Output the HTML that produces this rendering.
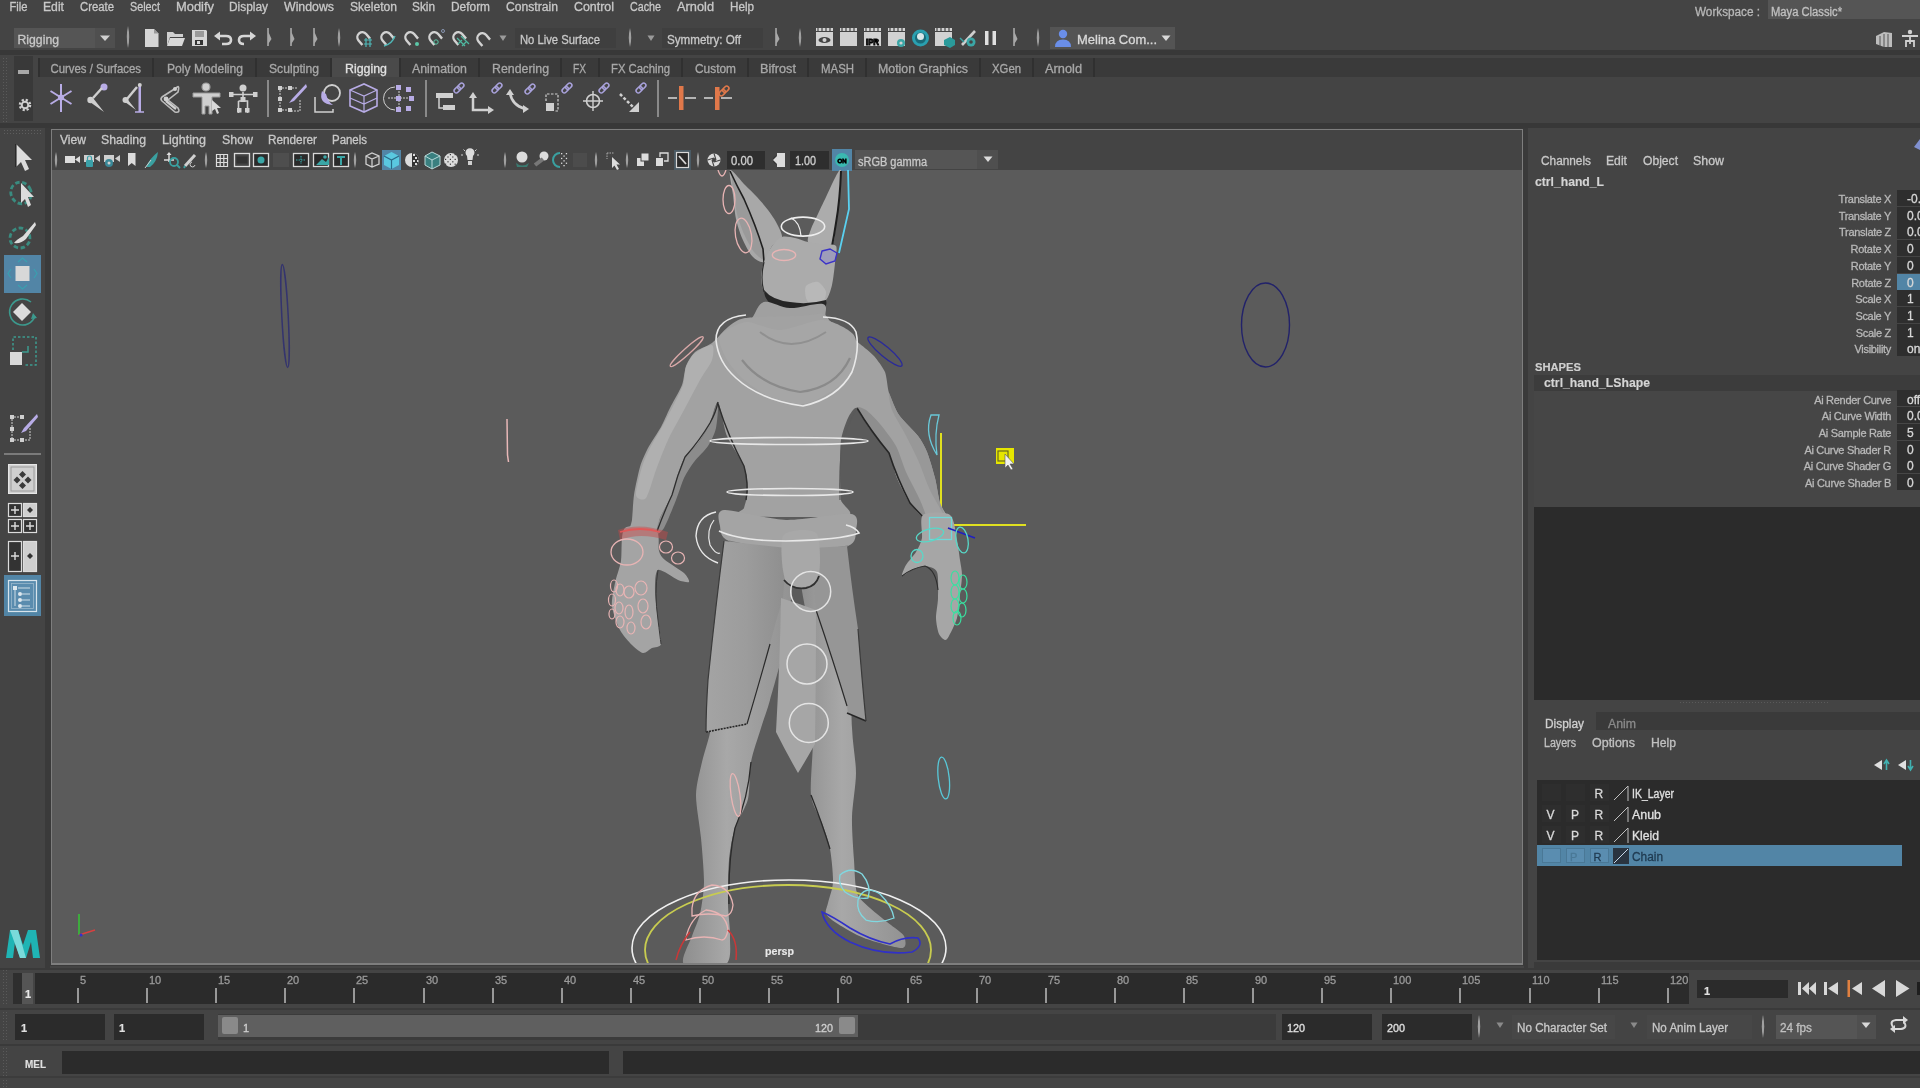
<!DOCTYPE html>
<html><head><meta charset="utf-8">
<style>
*{margin:0;padding:0;box-sizing:border-box}
html,body{width:1920px;height:1088px;overflow:hidden;background:#444;font-family:"Liberation Sans",sans-serif}
.a{position:absolute}
svg{position:absolute;left:0;top:0;will-change:transform}
text{font-family:"Liberation Sans",sans-serif;stroke:currentColor}
#root{position:absolute;left:0;top:0;width:1920px;height:1088px}
</style></head><body><div id="root">
<div class="a" style="left:1768px;top:0px;width:152px;height:19px;background:#555555;"></div>
<div class="a" style="left:0px;top:50px;width:1920px;height:5px;background:#383838;"></div>
<div class="a" style="left:14px;top:28px;width:81px;height:20px;background:#555555;"></div>
<div class="a" style="left:95px;top:28px;width:20px;height:20px;background:#4f4f4f;"></div>
<div class="a" style="left:515px;top:28px;width:101px;height:20px;background:#3f3f3f;"></div>
<div class="a" style="left:662px;top:28px;width:101px;height:20px;background:#3f3f3f;"></div>
<div class="a" style="left:1050px;top:27px;width:125px;height:22px;background:#545454;"></div>
<div class="a" style="left:14px;top:56px;width:19px;height:65px;background:#393939;"></div>
<div class="a" style="left:38px;top:58px;width:1882px;height:19px;background:#3a3a3a;"></div>
<div class="a" style="left:332px;top:58px;width:67px;height:19px;background:#4a4a4a;"></div>
<div class="a" style="left:0px;top:123px;width:1920px;height:5px;background:#383838;"></div>
<div class="a" style="left:45px;top:128px;width:5px;height:840px;background:#3a3a3a;"></div>
<div class="a" style="left:50px;top:128px;width:1474px;height:838px;background:#3a3a3a;"></div>
<div class="a" style="left:51px;top:129px;width:1472px;height:836px;background:#7e7e7e;"></div>
<div class="a" style="left:52px;top:130px;width:1470px;height:833px;background:#444444;"></div>
<div class="a" style="left:52px;top:170px;width:1470px;height:793px;background:#5b5b5b;"></div>
<div class="a" style="left:1524px;top:128px;width:4px;height:840px;background:#3a3a3a;"></div>
<div class="a" style="left:1897px;top:190px;width:23px;height:16px;background:#2e2e2e;"></div>
<div class="a" style="left:1897px;top:207px;width:23px;height:16px;background:#2e2e2e;"></div>
<div class="a" style="left:1897px;top:223px;width:23px;height:16px;background:#2e2e2e;"></div>
<div class="a" style="left:1897px;top:240px;width:23px;height:16px;background:#2e2e2e;"></div>
<div class="a" style="left:1897px;top:257px;width:23px;height:16px;background:#2e2e2e;"></div>
<div class="a" style="left:1897px;top:274px;width:23px;height:16px;background:#5285a6;"></div>
<div class="a" style="left:1897px;top:290px;width:23px;height:16px;background:#2e2e2e;"></div>
<div class="a" style="left:1897px;top:307px;width:23px;height:16px;background:#2e2e2e;"></div>
<div class="a" style="left:1897px;top:324px;width:23px;height:16px;background:#2e2e2e;"></div>
<div class="a" style="left:1897px;top:340px;width:23px;height:16px;background:#2e2e2e;"></div>
<div class="a" style="left:1534px;top:375px;width:386px;height:16px;background:#3c3c3c;"></div>
<div class="a" style="left:1534px;top:391px;width:386px;height:116px;background:#464646;"></div>
<div class="a" style="left:1897px;top:390px;width:23px;height:16px;background:#2e2e2e;"></div>
<div class="a" style="left:1897px;top:407px;width:23px;height:16px;background:#2e2e2e;"></div>
<div class="a" style="left:1897px;top:424px;width:23px;height:16px;background:#2e2e2e;"></div>
<div class="a" style="left:1897px;top:441px;width:23px;height:16px;background:#2e2e2e;"></div>
<div class="a" style="left:1897px;top:457px;width:23px;height:16px;background:#2e2e2e;"></div>
<div class="a" style="left:1897px;top:474px;width:23px;height:16px;background:#2e2e2e;"></div>
<div class="a" style="left:1534px;top:507px;width:386px;height:193px;background:#2b2b2b;"></div>
<div class="a" style="left:1534px;top:712px;width:386px;height:18px;background:#3a3a3a;"></div>
<div class="a" style="left:1534px;top:712px;width:62px;height:18px;background:#444444;"></div>
<div class="a" style="left:1537px;top:780px;width:383px;height:180px;background:#2b2b2b;"></div>
<div class="a" style="left:1542px;top:784px;width:19px;height:17px;background:#2e2e2e;"></div>
<div class="a" style="left:1566px;top:784px;width:19px;height:17px;background:#2e2e2e;"></div>
<div class="a" style="left:1590px;top:784px;width:19px;height:17px;background:#2e2e2e;"></div>
<div class="a" style="left:1542px;top:805px;width:19px;height:17px;background:#2e2e2e;"></div>
<div class="a" style="left:1566px;top:805px;width:19px;height:17px;background:#2e2e2e;"></div>
<div class="a" style="left:1590px;top:805px;width:19px;height:17px;background:#2e2e2e;"></div>
<div class="a" style="left:1542px;top:826px;width:19px;height:17px;background:#2e2e2e;"></div>
<div class="a" style="left:1566px;top:826px;width:19px;height:17px;background:#2e2e2e;"></div>
<div class="a" style="left:1590px;top:826px;width:19px;height:17px;background:#2e2e2e;"></div>
<div class="a" style="left:1537px;top:845px;width:365px;height:21px;background:#5285a6;"></div>
<div class="a" style="left:1542px;top:848px;width:19px;height:15px;background:#5a8db0;border:1px solid #4a7896"></div>
<div class="a" style="left:1566px;top:848px;width:19px;height:15px;background:#5a8db0;border:1px solid #4a7896"></div>
<div class="a" style="left:1590px;top:848px;width:19px;height:15px;background:#5a8db0;border:1px solid #4a7896"></div>
<div class="a" style="left:1613px;top:848px;width:16px;height:16px;background:#2a3440;"></div>
<div class="a" style="left:1534px;top:962px;width:386px;height:6px;background:#3a3a3a;"></div>
<div class="a" style="left:0px;top:968px;width:1920px;height:2px;background:#3a3a3a;"></div>
<div class="a" style="left:35px;top:973px;width:1654px;height:31px;background:#2b2b2b;"></div>
<div class="a" style="left:22px;top:973px;width:11px;height:31px;background:#555555;"></div>
<div class="a" style="left:77px;top:988px;width:2px;height:15px;background:#989898;"></div>
<div class="a" style="left:146px;top:988px;width:2px;height:15px;background:#989898;"></div>
<div class="a" style="left:215px;top:988px;width:2px;height:15px;background:#989898;"></div>
<div class="a" style="left:284px;top:988px;width:2px;height:15px;background:#989898;"></div>
<div class="a" style="left:353px;top:988px;width:2px;height:15px;background:#989898;"></div>
<div class="a" style="left:423px;top:988px;width:2px;height:15px;background:#989898;"></div>
<div class="a" style="left:492px;top:988px;width:2px;height:15px;background:#989898;"></div>
<div class="a" style="left:561px;top:988px;width:2px;height:15px;background:#989898;"></div>
<div class="a" style="left:630px;top:988px;width:2px;height:15px;background:#989898;"></div>
<div class="a" style="left:699px;top:988px;width:2px;height:15px;background:#989898;"></div>
<div class="a" style="left:768px;top:988px;width:2px;height:15px;background:#989898;"></div>
<div class="a" style="left:837px;top:988px;width:2px;height:15px;background:#989898;"></div>
<div class="a" style="left:907px;top:988px;width:2px;height:15px;background:#989898;"></div>
<div class="a" style="left:976px;top:988px;width:2px;height:15px;background:#989898;"></div>
<div class="a" style="left:1045px;top:988px;width:2px;height:15px;background:#989898;"></div>
<div class="a" style="left:1114px;top:988px;width:2px;height:15px;background:#989898;"></div>
<div class="a" style="left:1183px;top:988px;width:2px;height:15px;background:#989898;"></div>
<div class="a" style="left:1252px;top:988px;width:2px;height:15px;background:#989898;"></div>
<div class="a" style="left:1321px;top:988px;width:2px;height:15px;background:#989898;"></div>
<div class="a" style="left:1390px;top:988px;width:2px;height:15px;background:#989898;"></div>
<div class="a" style="left:1459px;top:988px;width:2px;height:15px;background:#989898;"></div>
<div class="a" style="left:1529px;top:988px;width:2px;height:15px;background:#989898;"></div>
<div class="a" style="left:1598px;top:988px;width:2px;height:15px;background:#989898;"></div>
<div class="a" style="left:1667px;top:988px;width:2px;height:15px;background:#989898;"></div>
<div class="a" style="left:1697px;top:980px;width:91px;height:18px;background:#2b2b2b;"></div>
<div class="a" style="left:0px;top:1008px;width:1920px;height:2px;background:#3a3a3a;"></div>
<div class="a" style="left:15px;top:1014px;width:90px;height:26px;background:#2b2b2b;"></div>
<div class="a" style="left:114px;top:1014px;width:90px;height:26px;background:#2b2b2b;"></div>
<div class="a" style="left:218px;top:1014px;width:1058px;height:26px;background:#3b3b3b;"></div>
<div class="a" style="left:218px;top:1015px;width:640px;height:22px;background:#5f5f5f;"></div>
<div class="a" style="left:222px;top:1017px;width:16px;height:17px;background:#8a8a8a;border-radius:2px"></div>
<div class="a" style="left:839px;top:1017px;width:16px;height:17px;background:#8a8a8a;border-radius:2px"></div>
<div class="a" style="left:1282px;top:1014px;width:90px;height:26px;background:#2b2b2b;"></div>
<div class="a" style="left:1382px;top:1014px;width:90px;height:26px;background:#2b2b2b;"></div>
<div class="a" style="left:1512px;top:1015px;width:103px;height:24px;background:#474747;"></div>
<div class="a" style="left:1647px;top:1015px;width:105px;height:24px;background:#474747;"></div>
<div class="a" style="left:1776px;top:1015px;width:100px;height:24px;background:#555555;"></div>
<div class="a" style="left:1857px;top:1015px;width:19px;height:24px;background:#4f4f4f;"></div>
<div class="a" style="left:0px;top:1044px;width:1920px;height:2px;background:#3a3a3a;"></div>
<div class="a" style="left:62px;top:1051px;width:547px;height:23px;background:#2b2b2b;"></div>
<div class="a" style="left:623px;top:1051px;width:1297px;height:23px;background:#2b2b2b;"></div>
<div class="a" style="left:0px;top:1076px;width:1920px;height:2px;background:#3c3c3c;"></div>
<div class="a" style="left:152px;top:58px;width:2px;height:19px;background:#303030;"></div>
<div class="a" style="left:255px;top:58px;width:2px;height:19px;background:#303030;"></div>
<div class="a" style="left:330px;top:58px;width:2px;height:19px;background:#303030;"></div>
<div class="a" style="left:399px;top:58px;width:2px;height:19px;background:#303030;"></div>
<div class="a" style="left:478px;top:58px;width:2px;height:19px;background:#303030;"></div>
<div class="a" style="left:560px;top:58px;width:2px;height:19px;background:#303030;"></div>
<div class="a" style="left:598px;top:58px;width:2px;height:19px;background:#303030;"></div>
<div class="a" style="left:681px;top:58px;width:2px;height:19px;background:#303030;"></div>
<div class="a" style="left:747px;top:58px;width:2px;height:19px;background:#303030;"></div>
<div class="a" style="left:807px;top:58px;width:2px;height:19px;background:#303030;"></div>
<div class="a" style="left:865px;top:58px;width:2px;height:19px;background:#303030;"></div>
<div class="a" style="left:979px;top:58px;width:2px;height:19px;background:#303030;"></div>
<div class="a" style="left:1032px;top:58px;width:2px;height:19px;background:#303030;"></div>
<div class="a" style="left:1093px;top:58px;width:2px;height:19px;background:#303030;"></div>
<div class="a" style="left:38px;top:58px;width:2px;height:19px;background:#303030;"></div>
<div class="a" style="left:267px;top:80px;width:2px;height:37px;background:#8a8a8a;"></div>
<div class="a" style="left:425px;top:80px;width:2px;height:37px;background:#8a8a8a;"></div>
<div class="a" style="left:657px;top:80px;width:2px;height:37px;background:#8a8a8a;"></div>
<div class="a" style="left:4px;top:255px;width:37px;height:38px;background:#5285a6;"></div>
<div class="a" style="left:4px;top:453px;width:37px;height:2px;background:#7a7a7a;"></div>
<div class="a" style="left:4px;top:575px;width:37px;height:41px;background:#5285a6;"></div>
<div class="a" style="left:382px;top:150px;width:19px;height:20px;background:#5285a6;"></div>
<div class="a" style="left:674px;top:150px;width:17px;height:20px;background:#4a5a64;"></div>
<div class="a" style="left:727px;top:151px;width:38px;height:18px;background:#2e2e2e;"></div>
<div class="a" style="left:790px;top:151px;width:39px;height:18px;background:#2e2e2e;"></div>
<div class="a" style="left:832px;top:149px;width:20px;height:22px;background:#5285a6;"></div>
<div class="a" style="left:855px;top:150px;width:122px;height:19px;background:#555555;"></div>
<div class="a" style="left:977px;top:150px;width:21px;height:19px;background:#4f4f4f;"></div>
<div class="a" style="left:1917px;top:982px;width:3px;height:13px;background:#1e1e1e;"></div>
<div class="a" style="left:13px;top:973px;width:9px;height:31px;background:#2e2e2e;"></div>
<div class="a" style="left:940px;top:433px;width:2px;height:77px;background:#e0e020;"></div>
<div class="a" style="left:952px;top:524px;width:74px;height:2px;background:#e0e020;"></div>
<svg width="1920" height="1088" viewBox="0 0 1920 1088">
<text x="9.5" y="11" font-size="12" fill="#c8c8c8" color="#c8c8c8" stroke-width="0.3" textLength="18" lengthAdjust="spacingAndGlyphs">File</text>
<text x="43" y="11" font-size="12" fill="#c8c8c8" color="#c8c8c8" stroke-width="0.3" textLength="21" lengthAdjust="spacingAndGlyphs">Edit</text>
<text x="80" y="11" font-size="12" fill="#c8c8c8" color="#c8c8c8" stroke-width="0.3" textLength="34" lengthAdjust="spacingAndGlyphs">Create</text>
<text x="130" y="11" font-size="12" fill="#c8c8c8" color="#c8c8c8" stroke-width="0.3" textLength="30" lengthAdjust="spacingAndGlyphs">Select</text>
<text x="176" y="11" font-size="12" fill="#c8c8c8" color="#c8c8c8" stroke-width="0.3" textLength="38" lengthAdjust="spacingAndGlyphs">Modify</text>
<text x="229" y="11" font-size="12" fill="#c8c8c8" color="#c8c8c8" stroke-width="0.3" textLength="39" lengthAdjust="spacingAndGlyphs">Display</text>
<text x="284" y="11" font-size="12" fill="#c8c8c8" color="#c8c8c8" stroke-width="0.3" textLength="50" lengthAdjust="spacingAndGlyphs">Windows</text>
<text x="350" y="11" font-size="12" fill="#c8c8c8" color="#c8c8c8" stroke-width="0.3" textLength="47" lengthAdjust="spacingAndGlyphs">Skeleton</text>
<text x="412" y="11" font-size="12" fill="#c8c8c8" color="#c8c8c8" stroke-width="0.3" textLength="23" lengthAdjust="spacingAndGlyphs">Skin</text>
<text x="451" y="11" font-size="12" fill="#c8c8c8" color="#c8c8c8" stroke-width="0.3" textLength="39" lengthAdjust="spacingAndGlyphs">Deform</text>
<text x="506" y="11" font-size="12" fill="#c8c8c8" color="#c8c8c8" stroke-width="0.3" textLength="52" lengthAdjust="spacingAndGlyphs">Constrain</text>
<text x="574" y="11" font-size="12" fill="#c8c8c8" color="#c8c8c8" stroke-width="0.3" textLength="40" lengthAdjust="spacingAndGlyphs">Control</text>
<text x="630" y="11" font-size="12" fill="#c8c8c8" color="#c8c8c8" stroke-width="0.3" textLength="31" lengthAdjust="spacingAndGlyphs">Cache</text>
<text x="677" y="11" font-size="12" fill="#c8c8c8" color="#c8c8c8" stroke-width="0.3" textLength="37" lengthAdjust="spacingAndGlyphs">Arnold</text>
<text x="730" y="11" font-size="12" fill="#c8c8c8" color="#c8c8c8" stroke-width="0.3" textLength="24" lengthAdjust="spacingAndGlyphs">Help</text>
<text x="1695" y="15.5" font-size="12" fill="#b8b8b8" color="#b8b8b8" stroke-width="0.3" textLength="65" lengthAdjust="spacingAndGlyphs">Workspace :</text>
<text x="1771" y="15.5" font-size="12" fill="#c0c0c0" color="#c0c0c0" stroke-width="0.3" textLength="71" lengthAdjust="spacingAndGlyphs">Maya Classic*</text>
<text x="17.5" y="44" font-size="12" fill="#c8c8c8" color="#c8c8c8" stroke-width="0.3" textLength="41.5" lengthAdjust="spacingAndGlyphs">Rigging</text>
<text x="520" y="44" font-size="12" fill="#c8c8c8" color="#c8c8c8" stroke-width="0.3" textLength="80" lengthAdjust="spacingAndGlyphs">No Live Surface</text>
<text x="667" y="44" font-size="12" fill="#c8c8c8" color="#c8c8c8" stroke-width="0.3" textLength="74" lengthAdjust="spacingAndGlyphs">Symmetry: Off</text>
<text x="1077" y="44" font-size="12" fill="#d8d8d8" color="#d8d8d8" stroke-width="0.3" textLength="80" lengthAdjust="spacingAndGlyphs">Melina Com...</text>
<text x="50.5" y="73" font-size="12" fill="#a8a8a8" color="#a8a8a8" stroke-width="0.3" textLength="90.5" lengthAdjust="spacingAndGlyphs">Curves / Surfaces</text>
<text x="167" y="73" font-size="12" fill="#a8a8a8" color="#a8a8a8" stroke-width="0.3" textLength="76" lengthAdjust="spacingAndGlyphs">Poly Modeling</text>
<text x="269" y="73" font-size="12" fill="#a8a8a8" color="#a8a8a8" stroke-width="0.3" textLength="50" lengthAdjust="spacingAndGlyphs">Sculpting</text>
<text x="345" y="73" font-size="12" fill="#e0e0e0" color="#e0e0e0" stroke-width="0.3" textLength="42" lengthAdjust="spacingAndGlyphs">Rigging</text>
<text x="412" y="73" font-size="12" fill="#a8a8a8" color="#a8a8a8" stroke-width="0.3" textLength="55" lengthAdjust="spacingAndGlyphs">Animation</text>
<text x="492" y="73" font-size="12" fill="#a8a8a8" color="#a8a8a8" stroke-width="0.3" textLength="57" lengthAdjust="spacingAndGlyphs">Rendering</text>
<text x="573" y="73" font-size="12" fill="#a8a8a8" color="#a8a8a8" stroke-width="0.3" textLength="13" lengthAdjust="spacingAndGlyphs">FX</text>
<text x="611" y="73" font-size="12" fill="#a8a8a8" color="#a8a8a8" stroke-width="0.3" textLength="59" lengthAdjust="spacingAndGlyphs">FX Caching</text>
<text x="695" y="73" font-size="12" fill="#a8a8a8" color="#a8a8a8" stroke-width="0.3" textLength="41" lengthAdjust="spacingAndGlyphs">Custom</text>
<text x="760" y="73" font-size="12" fill="#a8a8a8" color="#a8a8a8" stroke-width="0.3" textLength="36" lengthAdjust="spacingAndGlyphs">Bifrost</text>
<text x="821" y="73" font-size="12" fill="#a8a8a8" color="#a8a8a8" stroke-width="0.3" textLength="33" lengthAdjust="spacingAndGlyphs">MASH</text>
<text x="878" y="73" font-size="12" fill="#a8a8a8" color="#a8a8a8" stroke-width="0.3" textLength="90" lengthAdjust="spacingAndGlyphs">Motion Graphics</text>
<text x="992" y="73" font-size="12" fill="#a8a8a8" color="#a8a8a8" stroke-width="0.3" textLength="29" lengthAdjust="spacingAndGlyphs">XGen</text>
<text x="1045" y="73" font-size="12" fill="#a8a8a8" color="#a8a8a8" stroke-width="0.3" textLength="37" lengthAdjust="spacingAndGlyphs">Arnold</text>
<text x="60" y="144" font-size="12" fill="#c8c8c8" color="#c8c8c8" stroke-width="0.3" textLength="26" lengthAdjust="spacingAndGlyphs">View</text>
<text x="101" y="144" font-size="12" fill="#c8c8c8" color="#c8c8c8" stroke-width="0.3" textLength="45" lengthAdjust="spacingAndGlyphs">Shading</text>
<text x="162" y="144" font-size="12" fill="#c8c8c8" color="#c8c8c8" stroke-width="0.3" textLength="44" lengthAdjust="spacingAndGlyphs">Lighting</text>
<text x="222" y="144" font-size="12" fill="#c8c8c8" color="#c8c8c8" stroke-width="0.3" textLength="31" lengthAdjust="spacingAndGlyphs">Show</text>
<text x="268" y="144" font-size="12" fill="#c8c8c8" color="#c8c8c8" stroke-width="0.3" textLength="49" lengthAdjust="spacingAndGlyphs">Renderer</text>
<text x="332" y="144" font-size="12" fill="#c8c8c8" color="#c8c8c8" stroke-width="0.3" textLength="35" lengthAdjust="spacingAndGlyphs">Panels</text>
<text x="1541" y="165" font-size="12" fill="#c8c8c8" color="#c8c8c8" stroke-width="0.3" textLength="50" lengthAdjust="spacingAndGlyphs">Channels</text>
<text x="1606" y="165" font-size="12" fill="#c8c8c8" color="#c8c8c8" stroke-width="0.3" textLength="21" lengthAdjust="spacingAndGlyphs">Edit</text>
<text x="1643" y="165" font-size="12" fill="#c8c8c8" color="#c8c8c8" stroke-width="0.3" textLength="35" lengthAdjust="spacingAndGlyphs">Object</text>
<text x="1693" y="165" font-size="12" fill="#c8c8c8" color="#c8c8c8" stroke-width="0.3" textLength="31" lengthAdjust="spacingAndGlyphs">Show</text>
<text x="1535" y="186" font-size="12" fill="#d4d4d4" color="#d4d4d4" stroke-width="0.15" font-weight="700" textLength="69" lengthAdjust="spacingAndGlyphs">ctrl_hand_L</text>
<text x="1891" y="203.0" font-size="11" fill="#b8b8b8" color="#b8b8b8" stroke-width="0.3" text-anchor="end" letter-spacing="-0.3">Translate X</text>
<text x="1907" y="203.0" font-size="12" fill="#d8d8d8" color="#d8d8d8" stroke-width="0.3">-0.</text>
<text x="1891" y="219.7" font-size="11" fill="#b8b8b8" color="#b8b8b8" stroke-width="0.3" text-anchor="end" letter-spacing="-0.3">Translate Y</text>
<text x="1907" y="219.7" font-size="12" fill="#d8d8d8" color="#d8d8d8" stroke-width="0.3">0.0</text>
<text x="1891" y="236.4" font-size="11" fill="#b8b8b8" color="#b8b8b8" stroke-width="0.3" text-anchor="end" letter-spacing="-0.3">Translate Z</text>
<text x="1907" y="236.4" font-size="12" fill="#d8d8d8" color="#d8d8d8" stroke-width="0.3">0.0</text>
<text x="1891" y="253.1" font-size="11" fill="#b8b8b8" color="#b8b8b8" stroke-width="0.3" text-anchor="end" letter-spacing="-0.3">Rotate X</text>
<text x="1907" y="253.1" font-size="12" fill="#d8d8d8" color="#d8d8d8" stroke-width="0.3">0</text>
<text x="1891" y="269.8" font-size="11" fill="#b8b8b8" color="#b8b8b8" stroke-width="0.3" text-anchor="end" letter-spacing="-0.3">Rotate Y</text>
<text x="1907" y="269.8" font-size="12" fill="#d8d8d8" color="#d8d8d8" stroke-width="0.3">0</text>
<text x="1891" y="286.5" font-size="11" fill="#b8b8b8" color="#b8b8b8" stroke-width="0.3" text-anchor="end" letter-spacing="-0.3">Rotate Z</text>
<text x="1907" y="286.5" font-size="12" fill="#d8d8d8" color="#d8d8d8" stroke-width="0.3">0</text>
<text x="1891" y="303.2" font-size="11" fill="#b8b8b8" color="#b8b8b8" stroke-width="0.3" text-anchor="end" letter-spacing="-0.3">Scale X</text>
<text x="1907" y="303.2" font-size="12" fill="#d8d8d8" color="#d8d8d8" stroke-width="0.3">1</text>
<text x="1891" y="319.9" font-size="11" fill="#b8b8b8" color="#b8b8b8" stroke-width="0.3" text-anchor="end" letter-spacing="-0.3">Scale Y</text>
<text x="1907" y="319.9" font-size="12" fill="#d8d8d8" color="#d8d8d8" stroke-width="0.3">1</text>
<text x="1891" y="336.6" font-size="11" fill="#b8b8b8" color="#b8b8b8" stroke-width="0.3" text-anchor="end" letter-spacing="-0.3">Scale Z</text>
<text x="1907" y="336.6" font-size="12" fill="#d8d8d8" color="#d8d8d8" stroke-width="0.3">1</text>
<text x="1891" y="353.29999999999995" font-size="11" fill="#b8b8b8" color="#b8b8b8" stroke-width="0.3" text-anchor="end" letter-spacing="-0.3">Visibility</text>
<text x="1907" y="353.29999999999995" font-size="12" fill="#d8d8d8" color="#d8d8d8" stroke-width="0.3">on</text>
<text x="1535" y="370.5" font-size="11" fill="#d0d0d0" color="#d0d0d0" stroke-width="0.15" font-weight="700" textLength="46" lengthAdjust="spacingAndGlyphs">SHAPES</text>
<text x="1544" y="387" font-size="12" fill="#d4d4d4" color="#d4d4d4" stroke-width="0.15" font-weight="700" textLength="106" lengthAdjust="spacingAndGlyphs">ctrl_hand_LShape</text>
<text x="1891" y="403.5" font-size="11" fill="#b8b8b8" color="#b8b8b8" stroke-width="0.3" text-anchor="end" letter-spacing="-0.3">Ai Render Curve</text>
<text x="1907" y="403.5" font-size="12" fill="#d8d8d8" color="#d8d8d8" stroke-width="0.3">off</text>
<text x="1891" y="420.2" font-size="11" fill="#b8b8b8" color="#b8b8b8" stroke-width="0.3" text-anchor="end" letter-spacing="-0.3">Ai Curve Width</text>
<text x="1907" y="420.2" font-size="12" fill="#d8d8d8" color="#d8d8d8" stroke-width="0.3">0.0</text>
<text x="1891" y="436.9" font-size="11" fill="#b8b8b8" color="#b8b8b8" stroke-width="0.3" text-anchor="end" letter-spacing="-0.3">Ai Sample Rate</text>
<text x="1907" y="436.9" font-size="12" fill="#d8d8d8" color="#d8d8d8" stroke-width="0.3">5</text>
<text x="1891" y="453.6" font-size="11" fill="#b8b8b8" color="#b8b8b8" stroke-width="0.3" text-anchor="end" letter-spacing="-0.3">Ai Curve Shader R</text>
<text x="1907" y="453.6" font-size="12" fill="#d8d8d8" color="#d8d8d8" stroke-width="0.3">0</text>
<text x="1891" y="470.3" font-size="11" fill="#b8b8b8" color="#b8b8b8" stroke-width="0.3" text-anchor="end" letter-spacing="-0.3">Ai Curve Shader G</text>
<text x="1907" y="470.3" font-size="12" fill="#d8d8d8" color="#d8d8d8" stroke-width="0.3">0</text>
<text x="1891" y="487.0" font-size="11" fill="#b8b8b8" color="#b8b8b8" stroke-width="0.3" text-anchor="end" letter-spacing="-0.3">Ai Curve Shader B</text>
<text x="1907" y="487.0" font-size="12" fill="#d8d8d8" color="#d8d8d8" stroke-width="0.3">0</text>
<line x1="1680" y1="702.5" x2="1830" y2="702.5" stroke="#5a5a5a" stroke-width="1" stroke-dasharray="1,2"/>
<text x="1545" y="728" font-size="12" fill="#d0d0d0" color="#d0d0d0" stroke-width="0.3" textLength="39" lengthAdjust="spacingAndGlyphs">Display</text>
<text x="1608" y="728" font-size="12" fill="#8a8a8a" color="#8a8a8a" stroke-width="0.3" textLength="28" lengthAdjust="spacingAndGlyphs">Anim</text>
<text x="1544" y="746.5" font-size="12" fill="#c0c0c0" color="#c0c0c0" stroke-width="0.3" textLength="32" lengthAdjust="spacingAndGlyphs">Layers</text>
<text x="1592" y="746.5" font-size="12" fill="#c0c0c0" color="#c0c0c0" stroke-width="0.3" textLength="43" lengthAdjust="spacingAndGlyphs">Options</text>
<text x="1651" y="746.5" font-size="12" fill="#c0c0c0" color="#c0c0c0" stroke-width="0.3" textLength="25" lengthAdjust="spacingAndGlyphs">Help</text>
<text x="1594.5" y="797.5" font-size="12" fill="#d8d8d8" color="#d8d8d8" stroke-width="0.3">R</text>
<path d="M1614 800 L1628 786 L1628 801" fill="none" stroke="#c0c0c0" stroke-width="1"/>
<text x="1632" y="797.5" font-size="12" fill="#e0e0e0" color="#e0e0e0" stroke-width="0.3" textLength="42" lengthAdjust="spacingAndGlyphs">IK_Layer</text>
<text x="1546.5" y="818.5" font-size="12" fill="#d8d8d8" color="#d8d8d8" stroke-width="0.3">V</text>
<text x="1571" y="818.5" font-size="12" fill="#d8d8d8" color="#d8d8d8" stroke-width="0.3">P</text>
<text x="1594.5" y="818.5" font-size="12" fill="#d8d8d8" color="#d8d8d8" stroke-width="0.3">R</text>
<path d="M1614 821 L1628 807 L1628 822" fill="none" stroke="#c0c0c0" stroke-width="1"/>
<text x="1632" y="818.5" font-size="12" fill="#e0e0e0" color="#e0e0e0" stroke-width="0.3" textLength="29" lengthAdjust="spacingAndGlyphs">Anub</text>
<text x="1546.5" y="839.5" font-size="12" fill="#d8d8d8" color="#d8d8d8" stroke-width="0.3">V</text>
<text x="1571" y="839.5" font-size="12" fill="#d8d8d8" color="#d8d8d8" stroke-width="0.3">P</text>
<text x="1594.5" y="839.5" font-size="12" fill="#d8d8d8" color="#d8d8d8" stroke-width="0.3">R</text>
<path d="M1614 842 L1628 828 L1628 843" fill="none" stroke="#c0c0c0" stroke-width="1"/>
<text x="1632" y="839.5" font-size="12" fill="#e0e0e0" color="#e0e0e0" stroke-width="0.3" textLength="27" lengthAdjust="spacingAndGlyphs">Kleid</text>
<line x1="1614" y1="863" x2="1628" y2="849" stroke="#c8d8e8" stroke-width="1"/>
<text x="1632" y="860.5" font-size="12" fill="#1f3a50" color="#1f3a50" stroke-width="0.3" textLength="31" lengthAdjust="spacingAndGlyphs">Chain</text>
<text x="1593.5" y="860.5" font-size="11" fill="#1f3a50" color="#1f3a50" stroke-width="0.3">R</text>
<text x="1570" y="860.5" font-size="11" fill="#4a7896" color="#4a7896" stroke-width="0.3">P</text>
<text x="25" y="998" font-size="11" fill="#e8e8e8" color="#e8e8e8" stroke-width="0.15" font-weight="700">1</text>
<text x="80" y="984" font-size="11" fill="#9a9a9a" color="#9a9a9a" stroke-width="0.3">5</text>
<text x="149" y="984" font-size="11" fill="#9a9a9a" color="#9a9a9a" stroke-width="0.3">10</text>
<text x="218" y="984" font-size="11" fill="#9a9a9a" color="#9a9a9a" stroke-width="0.3">15</text>
<text x="287" y="984" font-size="11" fill="#9a9a9a" color="#9a9a9a" stroke-width="0.3">20</text>
<text x="356" y="984" font-size="11" fill="#9a9a9a" color="#9a9a9a" stroke-width="0.3">25</text>
<text x="426" y="984" font-size="11" fill="#9a9a9a" color="#9a9a9a" stroke-width="0.3">30</text>
<text x="495" y="984" font-size="11" fill="#9a9a9a" color="#9a9a9a" stroke-width="0.3">35</text>
<text x="564" y="984" font-size="11" fill="#9a9a9a" color="#9a9a9a" stroke-width="0.3">40</text>
<text x="633" y="984" font-size="11" fill="#9a9a9a" color="#9a9a9a" stroke-width="0.3">45</text>
<text x="702" y="984" font-size="11" fill="#9a9a9a" color="#9a9a9a" stroke-width="0.3">50</text>
<text x="771" y="984" font-size="11" fill="#9a9a9a" color="#9a9a9a" stroke-width="0.3">55</text>
<text x="840" y="984" font-size="11" fill="#9a9a9a" color="#9a9a9a" stroke-width="0.3">60</text>
<text x="910" y="984" font-size="11" fill="#9a9a9a" color="#9a9a9a" stroke-width="0.3">65</text>
<text x="979" y="984" font-size="11" fill="#9a9a9a" color="#9a9a9a" stroke-width="0.3">70</text>
<text x="1048" y="984" font-size="11" fill="#9a9a9a" color="#9a9a9a" stroke-width="0.3">75</text>
<text x="1117" y="984" font-size="11" fill="#9a9a9a" color="#9a9a9a" stroke-width="0.3">80</text>
<text x="1186" y="984" font-size="11" fill="#9a9a9a" color="#9a9a9a" stroke-width="0.3">85</text>
<text x="1255" y="984" font-size="11" fill="#9a9a9a" color="#9a9a9a" stroke-width="0.3">90</text>
<text x="1324" y="984" font-size="11" fill="#9a9a9a" color="#9a9a9a" stroke-width="0.3">95</text>
<text x="1393" y="984" font-size="11" fill="#9a9a9a" color="#9a9a9a" stroke-width="0.3">100</text>
<text x="1462" y="984" font-size="11" fill="#9a9a9a" color="#9a9a9a" stroke-width="0.3">105</text>
<text x="1532" y="984" font-size="11" fill="#9a9a9a" color="#9a9a9a" stroke-width="0.3">110</text>
<text x="1601" y="984" font-size="11" fill="#9a9a9a" color="#9a9a9a" stroke-width="0.3">115</text>
<text x="1670" y="984" font-size="11" fill="#9a9a9a" color="#9a9a9a" stroke-width="0.3">120</text>
<text x="1704" y="995" font-size="11" fill="#e0e0e0" color="#e0e0e0" stroke-width="0.15" font-weight="700">1</text>
<text x="21" y="1032" font-size="11" fill="#e0e0e0" color="#e0e0e0" stroke-width="0.15" font-weight="700">1</text>
<text x="119" y="1032" font-size="11" fill="#e0e0e0" color="#e0e0e0" stroke-width="0.15" font-weight="700">1</text>
<text x="243" y="1032" font-size="11" fill="#d0d0d0" color="#d0d0d0" stroke-width="0.3">1</text>
<text x="815" y="1032" font-size="11" fill="#d0d0d0" color="#d0d0d0" stroke-width="0.3" textLength="18" lengthAdjust="spacingAndGlyphs">120</text>
<text x="1287" y="1032" font-size="11" fill="#e0e0e0" color="#e0e0e0" stroke-width="0.3" textLength="18" lengthAdjust="spacingAndGlyphs">120</text>
<text x="1387" y="1032" font-size="11" fill="#e0e0e0" color="#e0e0e0" stroke-width="0.3" textLength="18" lengthAdjust="spacingAndGlyphs">200</text>
<text x="1517" y="1032" font-size="12" fill="#c8c8c8" color="#c8c8c8" stroke-width="0.3" textLength="90" lengthAdjust="spacingAndGlyphs">No Character Set</text>
<text x="1652" y="1032" font-size="12" fill="#c8c8c8" color="#c8c8c8" stroke-width="0.3" textLength="76" lengthAdjust="spacingAndGlyphs">No Anim Layer</text>
<text x="1780" y="1032" font-size="12" fill="#c0c0c0" color="#c0c0c0" stroke-width="0.3" textLength="32" lengthAdjust="spacingAndGlyphs">24 fps</text>
<text x="25" y="1068" font-size="11" fill="#e0e0e0" color="#e0e0e0" stroke-width="0.15" font-weight="700" textLength="21" lengthAdjust="spacingAndGlyphs">MEL</text>
<path d="M128 26 Q130.4 37.0 128 48 Q125.6 37.0 128 26Z" fill="#a0a0a0"/>
<path d="M100 35.5 L110 35.5 L105 41Z" fill="#d0d0d0"/>
<path d="M145 29 L154 29 L158.5 33.5 L158.5 47 L145 47Z" fill="#d6d6d6"/><path d="M154 29 L154 33.5 L158.5 33.5" fill="#9a9a9a"/>
<path d="M167 32 L173 32 L175 34 L183 34 L183 37 L170 37 L167 46Z" fill="#cfcfcf"/><path d="M170 38 L185 38 L182 46 L167 46Z" fill="#d8d8d8"/>
<path d="M192 30 L206 30 L207 31 L207 46 L192 46Z" fill="#d6d6d6"/><rect x="195" y="31" width="9" height="6" fill="#9a9a9a"/><rect x="195" y="40" width="8" height="5" fill="#333"/><rect x="197" y="41" width="3" height="3" fill="#d6d6d6"/>
<path d="M219 36 L226 36 Q231 36 231 40 Q231 44 226 44 L222 44" fill="none" stroke="#d6d6d6" stroke-width="2.6"/><path d="M214 36 L220 31.5 L220 40.5Z" fill="#d6d6d6"/>
<path d="M251 36 L244 36 Q239 36 239 40 Q239 44 244 44" fill="none" stroke="#d6d6d6" stroke-width="2.6"/><path d="M256 36 L250 31.5 L250 40.5Z" fill="#d6d6d6"/>
<path d="M267.2 28 L268.8 28 L268.9 33.0 L271.5 39.0 L268.9 43.0 L268.8 46 L267.2 46Z" fill="#a8a8a8"/>
<path d="M290.2 28 L291.8 28 L291.9 33.0 L294.5 39.0 L291.9 43.0 L291.8 46 L290.2 46Z" fill="#a8a8a8"/>
<path d="M313.2 28 L314.8 28 L314.9 33.0 L317.5 39.0 L314.9 43.0 L314.8 46 L313.2 46Z" fill="#a8a8a8"/>
<path d="M339 28 Q341.4 37.5 339 47 Q336.6 37.5 339 28Z" fill="#a0a0a0"/>
<g transform="translate(363,38) rotate(-40)"><path d="M-5 5 L-5 -1 A5 5 0 0 1 5 -1 L5 5" fill="none" stroke="#d2d2d2" stroke-width="2.4"/></g><path d="M364 40 h8 M364 44 h8 M366 38 v9 M370 38 v9" stroke="#4fb8b8" stroke-width="1.2"/>
<g transform="translate(387,38) rotate(-40)"><path d="M-5 5 L-5 -1 A5 5 0 0 1 5 -1 L5 5" fill="none" stroke="#d2d2d2" stroke-width="2.4"/></g><path d="M384 46 Q392 44 395 36" fill="none" stroke="#4fb8b8" stroke-width="1.4"/>
<g transform="translate(411,38) rotate(-40)"><path d="M-5 5 L-5 -1 A5 5 0 0 1 5 -1 L5 5" fill="none" stroke="#d2d2d2" stroke-width="2.4"/></g><circle cx="417" cy="44" r="2" fill="#5cc8a8"/>
<g transform="translate(435,38) rotate(-40)"><path d="M-5 5 L-5 -1 A5 5 0 0 1 5 -1 L5 5" fill="none" stroke="#d2d2d2" stroke-width="2.4"/></g><circle cx="436" cy="42" r="2.2" fill="none" stroke="#5cc8a8" stroke-width="1"/><circle cx="443" cy="31" r="1.5" fill="none" stroke="#9ac" stroke-width="0.8"/>
<g transform="translate(459,38) rotate(-40)"><path d="M-5 5 L-5 -1 A5 5 0 0 1 5 -1 L5 5" fill="none" stroke="#d2d2d2" stroke-width="2.4"/></g><path d="M457 38 L465 46 M461 36 L469 44 M462 40 L458 44 M466 42 L462 46" stroke="#4fb8a0" stroke-width="1.2"/>
<g transform="translate(483,39) rotate(-40)"><path d="M-5 5 L-5 -1 A5 5 0 0 1 5 -1 L5 5" fill="none" stroke="#d2d2d2" stroke-width="2.4"/></g>
<path d="M499.5 35.5 L506.5 35.5 L503 41Z" fill="#9a9a9a"/>
<path d="M630 28 Q632.4 37.5 630 47 Q627.6 37.5 630 28Z" fill="#a0a0a0"/>
<path d="M647.5 35.5 L654.5 35.5 L651 41Z" fill="#9a9a9a"/>
<path d="M775.2 28 L776.8 28 L776.9 33.0 L779.5 39.0 L776.9 43.0 L776.8 46 L775.2 46Z" fill="#a8a8a8"/>
<path d="M800 28 Q802.4 37.5 800 47 Q797.6 37.5 800 28Z" fill="#a0a0a0"/>
<rect x="816" y="32" width="17" height="14" fill="#d2d2d2"/><path d="M816 28 h17 v3 h-17z" fill="#d2d2d2"/><path d="M818 28 v3 M822 28 v3 M826 28 v3 M830 28 v3" stroke="#444" stroke-width="1.2"/><ellipse cx="824.5" cy="40" rx="6" ry="3" fill="#444"/><circle cx="824.5" cy="40" r="2" fill="#d2d2d2"/>
<rect x="840" y="32" width="17" height="14" fill="#d2d2d2"/><path d="M840 28 h17 v3 h-17z" fill="#d2d2d2"/><path d="M842 28 v3 M846 28 v3 M850 28 v3 M854 28 v3" stroke="#444" stroke-width="1.2"/>
<rect x="864" y="32" width="17" height="14" fill="#d2d2d2"/><path d="M864 28 h17 v3 h-17z" fill="#d2d2d2"/><path d="M866 28 v3 M870 28 v3 M874 28 v3 M878 28 v3" stroke="#444" stroke-width="1.2"/><text x="866" y="45" font-size="9" fill="#555" font-weight="700" textLength="13" lengthAdjust="spacingAndGlyphs">IPR</text>
<rect x="888" y="32" width="17" height="14" fill="#d2d2d2"/><path d="M888 28 h17 v3 h-17z" fill="#d2d2d2"/><path d="M890 28 v3 M894 28 v3 M898 28 v3 M902 28 v3" stroke="#444" stroke-width="1.2"/><circle cx="901" cy="43" r="4" fill="#3aa6a6"/><circle cx="901" cy="43" r="1.6" fill="#d2d2d2"/>
<circle cx="920.5" cy="38" r="8.5" fill="#2aa0b0"/><circle cx="920.5" cy="38" r="5.5" fill="#1a6a78"/><circle cx="920.5" cy="36.5" r="3.5" fill="#d8e8ea"/>
<rect x="935" y="32" width="17" height="14" fill="#d2d2d2"/><path d="M935 28 h17 v3 h-17z" fill="#d2d2d2"/><path d="M937 28 v3 M941 28 v3 M945 28 v3 M949 28 v3" stroke="#444" stroke-width="1.2"/><path d="M944 40 L950 37 L955 40 L955 45 L950 48 L944 45Z" fill="#2a9a9a"/>
<path d="M962 45 L975 31" stroke="#cfcfcf" stroke-width="2.6"/><circle cx="971" cy="42" r="4.5" fill="#3aa6a6"/><circle cx="971" cy="42" r="1.8" fill="#444"/><path d="M960 38 l4 4" stroke="#3aa6a6" stroke-width="1.5"/>
<rect x="985" y="31" width="3.5" height="14" fill="#e0e0e0"/><rect x="992.5" y="31" width="3.5" height="14" fill="#e0e0e0"/>
<path d="M1013.2 28 L1014.8 28 L1014.9 33.0 L1017.5 39.0 L1014.9 43.0 L1014.8 46 L1013.2 46Z" fill="#a8a8a8"/>
<path d="M1038 28 Q1040.4 37.5 1038 47 Q1035.6 37.5 1038 28Z" fill="#a0a0a0"/>
<circle cx="1063" cy="34" r="4.2" fill="#6a8ee8"/><path d="M1055 47 Q1055 39.5 1063 39.5 Q1071 39.5 1071 47Z" fill="#6a8ee8"/>
<path d="M1161.5 35.5 L1170.5 35.5 L1166 41Z" fill="#d8d8d8"/>
<path d="M1876 36 L1884 32 L1892 33 L1892 47 L1884 47 L1876 44Z" fill="#bdbdbd"/><path d="M1880 36 v10 M1884 34 v13 M1888 34 v13" stroke="#555" stroke-width="1"/>
<circle cx="1910" cy="32" r="2.2" fill="#d0d0d0"/><path d="M1902 36 h16 M1910 35 v9 M1906 47 v-6 h8 v6" stroke="#d0d0d0" stroke-width="1.8" fill="none"/>
<rect x="18" y="70" width="11" height="4" fill="#a8a8a8"/>
<circle cx="25" cy="105" r="5.2" fill="none" stroke="#cfcfcf" stroke-width="2.2" stroke-dasharray="2.2,1.9"/><circle cx="25" cy="105" r="3.3" fill="none" stroke="#cfcfcf" stroke-width="2"/>
<rect x="3" y="58" width="1" height="1" fill="#5a5a5a"/><rect x="6" y="58" width="1" height="1" fill="#5a5a5a"/>
<rect x="3" y="61" width="1" height="1" fill="#5a5a5a"/><rect x="6" y="61" width="1" height="1" fill="#5a5a5a"/>
<rect x="3" y="64" width="1" height="1" fill="#5a5a5a"/><rect x="6" y="64" width="1" height="1" fill="#5a5a5a"/>
<rect x="3" y="67" width="1" height="1" fill="#5a5a5a"/><rect x="6" y="67" width="1" height="1" fill="#5a5a5a"/>
<rect x="3" y="70" width="1" height="1" fill="#5a5a5a"/><rect x="6" y="70" width="1" height="1" fill="#5a5a5a"/>
<rect x="3" y="73" width="1" height="1" fill="#5a5a5a"/><rect x="6" y="73" width="1" height="1" fill="#5a5a5a"/>
<rect x="3" y="76" width="1" height="1" fill="#5a5a5a"/><rect x="6" y="76" width="1" height="1" fill="#5a5a5a"/>
<rect x="3" y="79" width="1" height="1" fill="#5a5a5a"/><rect x="6" y="79" width="1" height="1" fill="#5a5a5a"/>
<rect x="3" y="82" width="1" height="1" fill="#5a5a5a"/><rect x="6" y="82" width="1" height="1" fill="#5a5a5a"/>
<rect x="3" y="85" width="1" height="1" fill="#5a5a5a"/><rect x="6" y="85" width="1" height="1" fill="#5a5a5a"/>
<rect x="3" y="88" width="1" height="1" fill="#5a5a5a"/><rect x="6" y="88" width="1" height="1" fill="#5a5a5a"/>
<rect x="3" y="91" width="1" height="1" fill="#5a5a5a"/><rect x="6" y="91" width="1" height="1" fill="#5a5a5a"/>
<rect x="3" y="94" width="1" height="1" fill="#5a5a5a"/><rect x="6" y="94" width="1" height="1" fill="#5a5a5a"/>
<rect x="3" y="97" width="1" height="1" fill="#5a5a5a"/><rect x="6" y="97" width="1" height="1" fill="#5a5a5a"/>
<rect x="3" y="100" width="1" height="1" fill="#5a5a5a"/><rect x="6" y="100" width="1" height="1" fill="#5a5a5a"/>
<rect x="3" y="103" width="1" height="1" fill="#5a5a5a"/><rect x="6" y="103" width="1" height="1" fill="#5a5a5a"/>
<rect x="3" y="106" width="1" height="1" fill="#5a5a5a"/><rect x="6" y="106" width="1" height="1" fill="#5a5a5a"/>
<rect x="3" y="109" width="1" height="1" fill="#5a5a5a"/><rect x="6" y="109" width="1" height="1" fill="#5a5a5a"/>
<rect x="3" y="112" width="1" height="1" fill="#5a5a5a"/><rect x="6" y="112" width="1" height="1" fill="#5a5a5a"/>
<rect x="3" y="115" width="1" height="1" fill="#5a5a5a"/><rect x="6" y="115" width="1" height="1" fill="#5a5a5a"/>
<rect x="3" y="118" width="1" height="1" fill="#5a5a5a"/><rect x="6" y="118" width="1" height="1" fill="#5a5a5a"/>
<rect x="3" y="121" width="1" height="1" fill="#5a5a5a"/><rect x="6" y="121" width="1" height="1" fill="#5a5a5a"/>
<g stroke="#b8ace6" stroke-width="2"><path d="M61 84 V112"/><path d="M50.5 91 L71.5 104"/><path d="M50.5 104 L71.5 91"/></g><circle cx="61" cy="97.5" r="3" fill="#b8ace6"/>
<circle cx="104" cy="87" r="3.5" fill="#b8ace6"/><path d="M102 88 L93 98" stroke="#cfcfcf" stroke-width="2.5"/><circle cx="90.5" cy="100" r="3.2" fill="#cfcfcf"/><path d="M90 102 L104 112 L93 98Z" fill="#cfcfcf"/>
<rect x="138.5" y="85" width="2.5" height="27" fill="#b8ace6"/><path d="M135 112 h9" stroke="#b8ace6" stroke-width="1.5"/><circle cx="139.8" cy="85" r="2" fill="#cfcfcf"/><path d="M137 87 L127 99" stroke="#cfcfcf" stroke-width="2.5"/><circle cx="125.5" cy="100" r="3" fill="#cfcfcf"/><path d="M125 102 L136 110 L128 100Z" fill="#cfcfcf"/>
<path d="M176 88 Q180 84 178 92 L168 100 L178 108 Q181 113 175 112 L162 101 Q160 99 162 97Z" fill="none" stroke="#bdbdbd" stroke-width="1.6"/><circle cx="175" cy="89" r="2" fill="#d0d0d0"/><circle cx="166" cy="99" r="2.4" fill="#d0d0d0"/><path d="M166 101 L176 109" stroke="#d0d0d0" stroke-width="2.3"/>
<circle cx="206" cy="87" r="4" fill="#cfcfcf" stroke="#999" stroke-width="1.2"/><path d="M193 93 h27 v4 h-8 v17 h-3 v-8 h-4 v8 h-3 v-17 h-9z" fill="#cfcfcf" stroke="#999" stroke-width="1"/><path d="M212 100 L221 108 L217 108 L219 113 L217 114 L215 109 L212 111Z" fill="#d8d8d8"/>
<circle cx="243" cy="88" r="3.5" fill="#cfcfcf"/><path d="M232 94.5 h22 M243 92 v10 M238.5 101 h9 v12 M238.5 101 v12" stroke="#cfcfcf" stroke-width="1.6" fill="none"/><rect x="229" y="92" width="4.5" height="5" fill="#cfcfcf"/><rect x="253" y="92" width="4.5" height="5" fill="#cfcfcf"/><rect x="240.5" y="97" width="5" height="5" fill="#cfcfcf"/><rect x="237" y="108" width="4.5" height="4.5" fill="#cfcfcf"/><rect x="245" y="108" width="4.5" height="4.5" fill="#cfcfcf"/>
<g fill="#cfcfcf"><rect x="278" y="86" width="4" height="4"/><rect x="288" y="86" width="4" height="4"/><rect x="278" y="97" width="4" height="4"/><rect x="278" y="108" width="4" height="4"/><rect x="288" y="108" width="4" height="4"/></g><path d="M280 90 v18 M282 88 h6 M282 110 h6 M292 88 h6 M300 100 v11 h-8" stroke="#cfcfcf" stroke-width="1" stroke-dasharray="2,1" fill="none"/><path d="M306 84 L292 99 L289 103 L294 101 L307 87Z" fill="#b8ace6"/>
<circle cx="332" cy="93" r="8" fill="none" stroke="#cfcfcf" stroke-width="1.8"/><path d="M322 91 Q318 104 333 105 Q328 102 326 94Z" fill="#b8ace6"/><path d="M315 97 v15 h18 v-3" stroke="#cfcfcf" stroke-width="1.5" fill="none"/>
<path d="M350 90 L364 84 L377 90 L377 106 L364 112 L350 106Z" fill="none" stroke="#b8ace6" stroke-width="1.6"/><path d="M350 90 L364 96 L377 90 M364 96 V112 M350 98 L364 104 L377 98" fill="none" stroke="#b8ace6" stroke-width="1.2"/>
<path d="M395 87 A11 11 0 0 0 395 110" fill="none" stroke="#cfcfcf" stroke-width="1"/><path d="M388 98 h22 M399 88 v22" stroke="#cfcfcf" stroke-width="1" stroke-dasharray="2,1"/><g fill="#b8ace6"><rect x="396" y="85" width="5" height="5"/><rect x="406" y="87" width="5" height="5"/><rect x="396" y="96" width="5" height="5"/><rect x="409" y="96" width="5" height="5"/><rect x="396" y="107" width="5" height="5"/><rect x="406" y="106" width="5" height="5"/></g>
<rect x="436" y="93" width="17" height="5" fill="#d0d0d0"/><path d="M439 98 v10 h4" stroke="#d0d0d0" stroke-width="1.5" fill="none"/><rect x="443" y="105" width="12" height="5" fill="#d0d0d0"/>
<g transform="translate(459,88) rotate(-45)"><rect x="-6" y="-2.2" width="7" height="4.4" rx="2.2" fill="none" stroke="#a9a2dc" stroke-width="1.5"/><rect x="-1" y="-2.2" width="7" height="4.4" rx="2.2" fill="none" stroke="#a9a2dc" stroke-width="1.5"/></g>
<path d="M473 97 V110 H488" fill="none" stroke="#d0d0d0" stroke-width="2.5"/><path d="M469 98 L473 92 L477 98Z M488 106 L494 110 L488 114Z" fill="#d0d0d0"/>
<g transform="translate(497,88) rotate(-45)"><rect x="-6" y="-2.2" width="7" height="4.4" rx="2.2" fill="none" stroke="#a9a2dc" stroke-width="1.5"/><rect x="-1" y="-2.2" width="7" height="4.4" rx="2.2" fill="none" stroke="#a9a2dc" stroke-width="1.5"/></g>
<path d="M510 93 Q512 105 525 109" fill="none" stroke="#d0d0d0" stroke-width="2.6"/><path d="M506 95 L510 89 L514 95Z M523 105 L529 109 L523 113Z" fill="#d0d0d0"/>
<g transform="translate(530,89) rotate(-45)"><rect x="-6" y="-2.2" width="7" height="4.4" rx="2.2" fill="none" stroke="#a9a2dc" stroke-width="1.5"/><rect x="-1" y="-2.2" width="7" height="4.4" rx="2.2" fill="none" stroke="#a9a2dc" stroke-width="1.5"/></g>
<rect x="546" y="103" width="8" height="8" fill="#d0d0d0"/><path d="M546 101 v-7 h12 v17 h-4" fill="none" stroke="#d0d0d0" stroke-width="1.2" stroke-dasharray="2.5,1.5"/>
<g transform="translate(567,88) rotate(-45)"><rect x="-6" y="-2.2" width="7" height="4.4" rx="2.2" fill="none" stroke="#a9a2dc" stroke-width="1.5"/><rect x="-1" y="-2.2" width="7" height="4.4" rx="2.2" fill="none" stroke="#a9a2dc" stroke-width="1.5"/></g>
<circle cx="593" cy="101" r="6.5" fill="none" stroke="#d0d0d0" stroke-width="1.6"/><path d="M583 101 h20 M593 91 v20" stroke="#d0d0d0" stroke-width="1.4"/>
<g transform="translate(604,88) rotate(-45)"><rect x="-6" y="-2.2" width="7" height="4.4" rx="2.2" fill="none" stroke="#a9a2dc" stroke-width="1.5"/><rect x="-1" y="-2.2" width="7" height="4.4" rx="2.2" fill="none" stroke="#a9a2dc" stroke-width="1.5"/></g>
<path d="M620 94 L636 110" stroke="#d0d0d0" stroke-width="2.5" stroke-dasharray="3,2"/><path d="M629 112 L639 112 L639 102Z" fill="#d0d0d0"/>
<g transform="translate(641,88) rotate(-45)"><rect x="-6" y="-2.2" width="7" height="4.4" rx="2.2" fill="none" stroke="#a9a2dc" stroke-width="1.5"/><rect x="-1" y="-2.2" width="7" height="4.4" rx="2.2" fill="none" stroke="#a9a2dc" stroke-width="1.5"/></g>
<path d="M668 98 h9 M685 98 h11" stroke="#d8d8d8" stroke-width="1.5"/><rect x="679" y="86" width="4.5" height="24" fill="#e0784a"/>
<path d="M704 98 h9 M721 98 h11" stroke="#d8d8d8" stroke-width="1.5"/><rect x="715" y="87" width="4.5" height="23" fill="#e0784a"/><g transform="translate(724,91) rotate(-45)"><rect x="-6" y="-2.2" width="7" height="4.4" rx="2.2" fill="none" stroke="#e0784a" stroke-width="1.6"/><rect x="-1" y="-2.2" width="7" height="4.4" rx="2.2" fill="none" stroke="#e0784a" stroke-width="1.6"/></g>
<rect x="4" y="130" width="1" height="1" fill="#5e5e5e"/><rect x="4" y="133" width="1" height="1" fill="#5e5e5e"/>
<rect x="7" y="130" width="1" height="1" fill="#5e5e5e"/><rect x="7" y="133" width="1" height="1" fill="#5e5e5e"/>
<rect x="10" y="130" width="1" height="1" fill="#5e5e5e"/><rect x="10" y="133" width="1" height="1" fill="#5e5e5e"/>
<rect x="13" y="130" width="1" height="1" fill="#5e5e5e"/><rect x="13" y="133" width="1" height="1" fill="#5e5e5e"/>
<rect x="16" y="130" width="1" height="1" fill="#5e5e5e"/><rect x="16" y="133" width="1" height="1" fill="#5e5e5e"/>
<rect x="19" y="130" width="1" height="1" fill="#5e5e5e"/><rect x="19" y="133" width="1" height="1" fill="#5e5e5e"/>
<rect x="22" y="130" width="1" height="1" fill="#5e5e5e"/><rect x="22" y="133" width="1" height="1" fill="#5e5e5e"/>
<rect x="25" y="130" width="1" height="1" fill="#5e5e5e"/><rect x="25" y="133" width="1" height="1" fill="#5e5e5e"/>
<rect x="28" y="130" width="1" height="1" fill="#5e5e5e"/><rect x="28" y="133" width="1" height="1" fill="#5e5e5e"/>
<rect x="31" y="130" width="1" height="1" fill="#5e5e5e"/><rect x="31" y="133" width="1" height="1" fill="#5e5e5e"/>
<rect x="34" y="130" width="1" height="1" fill="#5e5e5e"/><rect x="34" y="133" width="1" height="1" fill="#5e5e5e"/>
<rect x="37" y="130" width="1" height="1" fill="#5e5e5e"/><rect x="37" y="133" width="1" height="1" fill="#5e5e5e"/>
<rect x="40" y="130" width="1" height="1" fill="#5e5e5e"/><rect x="40" y="133" width="1" height="1" fill="#5e5e5e"/>
<path d="M16 144 L16 167 L21 162 L25 171 L29 169 L25 160 L32 160Z" fill="#dcdcdc"/><path d="M16 144 L16 167" stroke="#111" stroke-width="1"/>
<ellipse cx="21" cy="193" rx="10" ry="11" transform="rotate(-30 21 193)" fill="none" stroke="#3a8c80" stroke-width="2.8" stroke-dasharray="4.5,2.5"/><path d="M21 183 L21 203 L25 199 L28 207 L31 205 L28 197 L34 197Z" fill="#dcdcdc"/>
<ellipse cx="20" cy="238" rx="10" ry="10" transform="rotate(-20 20 238)" fill="none" stroke="#3a8c80" stroke-width="2.8" stroke-dasharray="4.5,2.5"/><path d="M35 222 L23 236 Q16 240 14 243 Q21 244 26 239 L36 225Z" fill="#dcdcdc"/>
<rect x="15.5" y="266" width="14" height="15" fill="#d8d8d8"/><path d="M18 262 L22.5 258 L27 262 M18 285 L22.5 289 L27 285 M11 269 L8 273.5 L11 278 M34 269 L37 273.5 L34 278" fill="none" stroke="#3aa0b0" stroke-width="1.2"/>
<path d="M31 302 A13 13 0 1 0 35 316" fill="none" stroke="#3c9a8e" stroke-width="1.6"/><path d="M33 313 L37 318 L31 319Z" fill="#3c9a8e"/><path d="M22 303 L31 312 L22 321 L13 312Z" fill="#dcdcdc"/>
<rect x="10" y="352" width="12" height="13" fill="#d8d8d8"/><path d="M13 350 V337 H36 V365 H24" fill="none" stroke="#3c9a8e" stroke-width="1.5" stroke-dasharray="2.5,2"/><path d="M22 352 h6 v-6" fill="none" stroke="#3c9a8e" stroke-width="1.5"/>
<g fill="#cfcfcf"><rect x="10" y="415" width="4" height="4"/><rect x="20" y="415" width="4" height="4"/><rect x="10" y="427" width="4" height="4"/><rect x="10" y="438" width="4" height="4"/><rect x="20" y="438" width="4" height="4"/></g><path d="M12 419 v19 M14 417 h6 M14 440 h6 M30 428 v12 h-6" stroke="#cfcfcf" stroke-width="1" stroke-dasharray="2,1" fill="none"/><path d="M37 414 L24 428 L21 433 L26 431 L38 417Z" fill="#b8ace6"/>
<rect x="8.5" y="464.5" width="28" height="29" fill="#cfcfcf" stroke="#e6e6e6" stroke-width="1"/><rect x="11" y="467" width="23" height="24" fill="none" stroke="#9a9a9a" stroke-width="1"/><g fill="#3a3a3a"><path d="M22.5 471 L26 474.5 L22.5 478 L19 474.5Z"/><path d="M17 476.5 L20.5 480 L17 483.5 L13.5 480Z"/><path d="M28 476.5 L31.5 480 L28 483.5 L24.5 480Z"/><path d="M22.5 482 L26 485.5 L22.5 489 L19 485.5Z"/></g>
<g stroke="#dcdcdc" stroke-width="1.2"><rect x="8.5" y="503.5" width="13" height="13" fill="#333"/><rect x="23.5" y="503.5" width="13" height="13" fill="#cfcfcf"/><rect x="8.5" y="519.5" width="13" height="13" fill="#333"/><rect x="23.5" y="519.5" width="13" height="13" fill="#333"/></g><path d="M11 510 h8 M15 506 v8 M11 526 h8 M15 522 v8 M26 526 h8 M30 522 v8" stroke="#dcdcdc" stroke-width="1.4"/><path d="M30 507 L33 510 L30 513 L27 510Z" fill="#333"/>
<rect x="8.5" y="541.5" width="13" height="30" fill="#333" stroke="#dcdcdc" stroke-width="1.2"/><rect x="23.5" y="541.5" width="13" height="30" fill="#cfcfcf" stroke="#dcdcdc" stroke-width="1.2"/><path d="M11 556 h8 M15 552 v8" stroke="#dcdcdc" stroke-width="1.4"/><path d="M30 553 L33 556 L30 559 L27 556Z" fill="#333"/>
<rect x="8.5" y="580.5" width="28" height="31" fill="#5a8cae" stroke="#d8e4ec" stroke-width="1.2"/><rect x="11.5" y="583.5" width="22" height="25" fill="none" stroke="#9ab8cc" stroke-width="0.8"/><g fill="#dde8ee"><rect x="13" y="586" width="4" height="4"/><circle cx="20" cy="594" r="2"/><circle cx="20" cy="600" r="2"/><circle cx="20" cy="606" r="2"/></g><path d="M15 590 v16 M22 594 h8 M22 600 h8 M22 606 h8 M18 588 h12" stroke="#dde8ee" stroke-width="0.9"/>
<path d="M6 958 L10 930 L18 930 L23 945 L28 930 L36 930 L40 958 L33 958 L31 942 L26 958 L20 958 L15 942 L13 958Z" fill="#1fb4b4"/><path d="M10 930 L18 930 L26 958 L20 958Z" fill="#7adada"/>
<path d="M56 152 Q58.4 160.0 56 168 Q53.6 160.0 56 152Z" fill="#a0a0a0"/>
<rect x="65" y="156" width="10" height="7" fill="#dcdcdc"/><path d="M75 159.5 L80 156 L80 163Z" fill="#dcdcdc"/>
<rect x="84" y="155" width="10" height="7" fill="#cfcfcf"/><path d="M95 158.5 L100 155 L100 162Z" fill="#cfcfcf"/><rect x="86" y="160" width="7" height="7" rx="1" fill="#3aa0a8"/><path d="M87.5 160 v-2 a2 2 0 0 1 4 0 v2" fill="none" stroke="#3aa0a8" stroke-width="1.2"/>
<rect x="104" y="155" width="10" height="7" fill="#cfcfcf"/><path d="M115 158.5 L120 155 L120 162Z" fill="#cfcfcf"/><circle cx="109" cy="163" r="4" fill="#3a8898"/><circle cx="109" cy="163" r="1.5" fill="#cfcfcf"/>
<path d="M128 153 h7.5 v13 l-3.75 -3 l-3.75 3Z" fill="#dcdcdc"/>
<path d="M146 167 Q150 158 158 152 Q157 162 150 167Z" fill="#3aa0a0"/><path d="M145 168 L151 160" stroke="#cfcfcf" stroke-width="1"/>
<path d="M164 160 h10 M169 153 v9" stroke="#dcdcdc" stroke-width="1.5"/><path d="M166.5 155 L169 152 L171.5 155Z" fill="#dcdcdc"/><circle cx="174" cy="162" r="4" fill="none" stroke="#3aa0a0" stroke-width="1.8"/><path d="M177 165 l3 3" stroke="#3aa0a0" stroke-width="1.8"/>
<path d="M185 166 L195 155" stroke="#d0d0d0" stroke-width="3"/><path d="M185 166 l-1 2" stroke="#3aa0a0" stroke-width="2"/><path d="M192 162 a2.5 2.5 0 1 0 3 3" fill="none" stroke="#cfcfcf" stroke-width="1"/>
<path d="M206 152 Q208.4 160.0 206 168 Q203.6 160.0 206 152Z" fill="#a0a0a0"/>
<path d="M216.5 154.5 h11 v12 h-11z M216.5 158.5 h11 M216.5 162.5 h11 M220.2 154.5 v12 M223.8 154.5 v12" fill="none" stroke="#dcdcdc" stroke-width="1.2"/>
<rect x="234.5" y="153.5" width="15" height="13" fill="none" stroke="#dcdcdc" stroke-width="1.3"/><rect x="236.5" y="156.5" width="11" height="7" fill="#333"/>
<rect x="253.5" y="153.5" width="15" height="13" fill="#2a2a2a" stroke="#d8d8d8" stroke-width="1.3"/><circle cx="261" cy="160" r="3.5" fill="#3aa6a6"/>
<rect x="273" y="153" width="16" height="14" fill="#4e4e4e"/>
<rect x="293.5" y="153.5" width="15" height="13" fill="#2a2a2a" stroke="#d8d8d8" stroke-width="1.3"/><path d="M296 160 h10 M301 156 v8" stroke="#3aa6a6" stroke-width="1.2" stroke-dasharray="1.5,1"/>
<rect x="313.5" y="153.5" width="15" height="13" fill="#2a2a2a" stroke="#d8d8d8" stroke-width="1.3"/><path d="M316 165 L322 159 L326 162 L329 157 V165Z" fill="#3aa6a6"/><circle cx="325" cy="157" r="1.8" fill="#3aa6a6"/>
<rect x="333.5" y="153.5" width="15" height="13" fill="#2a2a2a" stroke="#d8d8d8" stroke-width="1.3"/><path d="M337 157 h8 M341 157 v8" stroke="#3aa6a6" stroke-width="2"/>
<path d="M355 152 Q357.4 160.0 355 168 Q352.6 160.0 355 152Z" fill="#a0a0a0"/>
<path d="M366 156 L372 153 L379 156 L379 164 L372 167 L366 164Z M366 156 L372 159 L379 156 M372 159 V167" fill="none" stroke="#d0d0d0" stroke-width="1.3"/>
<path d="M384 156 L391.5 152 L399 156 L399 165 L391.5 169 L384 165Z" fill="#5ac8e0"/><path d="M384 156 L391.5 160 L399 156 M391.5 160 V169" fill="none" stroke="#2a6a88" stroke-width="1.2"/>
<circle cx="412" cy="160" r="7" fill="#dcdcdc"/><path d="M412 153 A7 7 0 0 1 412 167Z" fill="#333"/><g fill="#dcdcdc"><rect x="413" y="154" width="2" height="2"/><rect x="415" y="157" width="2" height="2"/><rect x="413" y="160" width="2" height="2"/><rect x="415" y="163" width="2" height="2"/><rect x="417" y="160" width="1.5" height="2"/></g>
<path d="M425 156 L432 152 L440 156 L440 165 L432 169 L425 165Z" fill="#3a8080" stroke="#b8d8d8" stroke-width="1"/><path d="M425 156 L432 160 L440 156 M432 160 V169" fill="none" stroke="#b8d8d8" stroke-width="1"/>
<circle cx="451" cy="160" r="7" fill="#dcdcdc"/><g fill="#3a3a3a"><rect x="445.0" y="154.0" width="1.2" height="1.2"/><rect x="445.0" y="158.8" width="1.2" height="1.2"/><rect x="445.0" y="163.6" width="1.2" height="1.2"/><rect x="447.4" y="156.4" width="1.2" height="1.2"/><rect x="447.4" y="161.2" width="1.2" height="1.2"/><rect x="449.8" y="154.0" width="1.2" height="1.2"/><rect x="449.8" y="158.8" width="1.2" height="1.2"/><rect x="449.8" y="163.6" width="1.2" height="1.2"/><rect x="452.2" y="156.4" width="1.2" height="1.2"/><rect x="452.2" y="161.2" width="1.2" height="1.2"/><rect x="454.6" y="154.0" width="1.2" height="1.2"/><rect x="454.6" y="158.8" width="1.2" height="1.2"/><rect x="454.6" y="163.6" width="1.2" height="1.2"/></g>
<path d="M467 156 a4.5 4.5 0 1 1 6 0 l-0.5 4 h-5z" fill="#dcdcdc"/><rect x="468" y="161" width="4" height="4" fill="#cfcfcf"/><path d="M463 155 h-2 M477 155 h2 M470 151 v-2 M465 151 l-1.5 -1.5 M475 151 l1.5 -1.5" stroke="#cfcfcf" stroke-width="1"/>
<path d="M505 152 Q507.4 160.0 505 168 Q502.6 160.0 505 152Z" fill="#a0a0a0"/>
<circle cx="522" cy="157" r="5.5" fill="#dcdcdc"/><path d="M516 163 Q522 168 529 163 L527 167 L517 167Z" fill="#3a7a70"/>
<circle cx="544" cy="156" r="4.5" fill="#dcdcdc"/><path d="M535 165 L543 159" stroke="#777" stroke-width="4"/>
<path d="M560 153 A7 7 0 0 0 560 167" fill="none" stroke="#3aa0a0" stroke-width="2"/><g fill="#dcdcdc"><rect x="561.0" y="153.0" width="1.3" height="1.3"/><rect x="561.0" y="157.8" width="1.3" height="1.3"/><rect x="561.0" y="162.6" width="1.3" height="1.3"/><rect x="563.4" y="155.4" width="1.3" height="1.3"/><rect x="563.4" y="160.2" width="1.3" height="1.3"/><rect x="563.4" y="165.0" width="1.3" height="1.3"/><rect x="565.8" y="153.0" width="1.3" height="1.3"/><rect x="565.8" y="157.8" width="1.3" height="1.3"/><rect x="565.8" y="162.6" width="1.3" height="1.3"/></g>
<rect x="573" y="153" width="14" height="14" fill="#4c4c4c"/>
<path d="M596 152 Q598.4 160.0 596 168 Q593.6 160.0 596 152Z" fill="#a0a0a0"/>
<path d="M607 153 v6 M607 153 h7" stroke="#aaa" stroke-width="1" stroke-dasharray="1.5,1"/><path d="M612 157 L612 168 L614.5 165.5 L617 170 L619 169 L616.5 164.5 L620 164.5Z" fill="#dcdcdc"/>
<path d="M627 152 Q629.4 160.0 627 168 Q624.6 160.0 627 152Z" fill="#a0a0a0"/>
<rect x="637" y="158" width="7" height="8" fill="#dcdcdc"/><rect x="641" y="153" width="8" height="8" fill="#dcdcdc" stroke="#444" stroke-width="1"/>
<rect x="656" y="158" width="7" height="8" fill="#dcdcdc"/><path d="M660 157 v-4 h8 v8 h-4" fill="none" stroke="#dcdcdc" stroke-width="1.3"/>
<rect x="676.5" y="152.5" width="12" height="15" fill="#2a2a2a" stroke="#d8d8d8" stroke-width="1.2"/><path d="M679 156 L686 164" stroke="#d8d8d8" stroke-width="1.8"/>
<path d="M698 152 Q700.4 160.0 698 168 Q695.6 160.0 698 152Z" fill="#a0a0a0"/>
<circle cx="714" cy="160" r="6.5" fill="#dcdcdc"/><g stroke="#444" stroke-width="1.1"><path d="M714 153.5 L716 160 M720.5 160 L714 162 M714 166.5 L712 160 M707.5 160 L714 158"/></g><circle cx="714" cy="160" r="2" fill="#444"/>
<text x="731" y="165" font-size="12" fill="#d0d0d0" color="#d0d0d0" stroke-width="0.3" textLength="22" lengthAdjust="spacingAndGlyphs">0.00</text>
<rect x="777" y="153" width="8" height="14" fill="#dcdcdc"/><path d="M777 156 a4 4 0 0 0 0 8Z" fill="#333"/><path d="M777 156 L773 160 L777 164Z" fill="#dcdcdc"/>
<text x="795" y="165" font-size="12" fill="#d0d0d0" color="#d0d0d0" stroke-width="0.3" textLength="21" lengthAdjust="spacingAndGlyphs">1.00</text>
<circle cx="842" cy="160" r="7" fill="#3ab8b0"/><text x="837.5" y="163" font-size="6" fill="#1f6f6a">ON</text>
<text x="858" y="166" font-size="12" fill="#c8c8c8" color="#c8c8c8" stroke-width="0.3" textLength="69" lengthAdjust="spacingAndGlyphs">sRGB gamma</text>
<path d="M983.5 156.5 L992.5 156.5 L988 162Z" fill="#dcdcdc"/>
<rect x="1798" y="982" width="3" height="13" fill="#d8d8d8"/><path d="M1809 982 L1802 988.5 L1809 995Z M1816 982 L1809 988.5 L1816 995Z" fill="#d8d8d8"/>
<rect x="1824" y="982" width="3" height="13" fill="#d8d8d8"/><path d="M1838 982 L1828 988.5 L1838 995Z" fill="#d8d8d8"/>
<rect x="1847.5" y="980" width="2.5" height="17" fill="#e08040"/><path d="M1862 982 L1852 988.5 L1862 995Z" fill="#d8d8d8"/>
<path d="M1885 980 L1872 988.5 L1885 997Z" fill="#d8d8d8"/>
<path d="M1896 980 L1909.5 988.5 L1896 997Z" fill="#d8d8d8"/>
<path d="M1479 1015 Q1481.4 1026.5 1479 1038 Q1476.6 1026.5 1479 1015Z" fill="#a0a0a0"/>
<path d="M1496.5 1022.5 L1503.5 1022.5 L1500 1028Z" fill="#8a8a8a"/>
<path d="M1630.5 1022.5 L1637.5 1022.5 L1634 1028Z" fill="#8a8a8a"/>
<path d="M1763 1015 Q1765.4 1026.5 1763 1038 Q1760.6 1026.5 1763 1015Z" fill="#a0a0a0"/>
<path d="M1861.5 1022.5 L1870.5 1022.5 L1866 1028Z" fill="#d8d8d8"/>
<path d="M1893 1027 Q1889 1021 1896 1020 L1904 1020" fill="none" stroke="#d8d8d8" stroke-width="2"/><path d="M1903 1016 L1908 1020 L1903 1024Z" fill="#d8d8d8"/><path d="M1904 1022 Q1908 1028 1901 1029 L1894 1029" fill="none" stroke="#d8d8d8" stroke-width="2"/><path d="M1895 1025 L1890 1029 L1895 1033Z" fill="#d8d8d8"/>
<rect x="3" y="970" width="1" height="1" fill="#5a5a5a"/><rect x="6" y="970" width="1" height="1" fill="#5a5a5a"/>
<rect x="3" y="973" width="1" height="1" fill="#5a5a5a"/><rect x="6" y="973" width="1" height="1" fill="#5a5a5a"/>
<rect x="3" y="976" width="1" height="1" fill="#5a5a5a"/><rect x="6" y="976" width="1" height="1" fill="#5a5a5a"/>
<rect x="3" y="979" width="1" height="1" fill="#5a5a5a"/><rect x="6" y="979" width="1" height="1" fill="#5a5a5a"/>
<rect x="3" y="982" width="1" height="1" fill="#5a5a5a"/><rect x="6" y="982" width="1" height="1" fill="#5a5a5a"/>
<rect x="3" y="985" width="1" height="1" fill="#5a5a5a"/><rect x="6" y="985" width="1" height="1" fill="#5a5a5a"/>
<rect x="3" y="988" width="1" height="1" fill="#5a5a5a"/><rect x="6" y="988" width="1" height="1" fill="#5a5a5a"/>
<rect x="3" y="991" width="1" height="1" fill="#5a5a5a"/><rect x="6" y="991" width="1" height="1" fill="#5a5a5a"/>
<rect x="3" y="994" width="1" height="1" fill="#5a5a5a"/><rect x="6" y="994" width="1" height="1" fill="#5a5a5a"/>
<rect x="3" y="997" width="1" height="1" fill="#5a5a5a"/><rect x="6" y="997" width="1" height="1" fill="#5a5a5a"/>
<rect x="3" y="1000" width="1" height="1" fill="#5a5a5a"/><rect x="6" y="1000" width="1" height="1" fill="#5a5a5a"/>
<rect x="3" y="1003" width="1" height="1" fill="#5a5a5a"/><rect x="6" y="1003" width="1" height="1" fill="#5a5a5a"/>
<rect x="3" y="1012" width="1" height="1" fill="#5a5a5a"/><rect x="6" y="1012" width="1" height="1" fill="#5a5a5a"/>
<rect x="3" y="1015" width="1" height="1" fill="#5a5a5a"/><rect x="6" y="1015" width="1" height="1" fill="#5a5a5a"/>
<rect x="3" y="1018" width="1" height="1" fill="#5a5a5a"/><rect x="6" y="1018" width="1" height="1" fill="#5a5a5a"/>
<rect x="3" y="1021" width="1" height="1" fill="#5a5a5a"/><rect x="6" y="1021" width="1" height="1" fill="#5a5a5a"/>
<rect x="3" y="1024" width="1" height="1" fill="#5a5a5a"/><rect x="6" y="1024" width="1" height="1" fill="#5a5a5a"/>
<rect x="3" y="1027" width="1" height="1" fill="#5a5a5a"/><rect x="6" y="1027" width="1" height="1" fill="#5a5a5a"/>
<rect x="3" y="1030" width="1" height="1" fill="#5a5a5a"/><rect x="6" y="1030" width="1" height="1" fill="#5a5a5a"/>
<rect x="3" y="1033" width="1" height="1" fill="#5a5a5a"/><rect x="6" y="1033" width="1" height="1" fill="#5a5a5a"/>
<rect x="3" y="1036" width="1" height="1" fill="#5a5a5a"/><rect x="6" y="1036" width="1" height="1" fill="#5a5a5a"/>
<rect x="3" y="1039" width="1" height="1" fill="#5a5a5a"/><rect x="6" y="1039" width="1" height="1" fill="#5a5a5a"/>
<rect x="3" y="1048" width="1" height="1" fill="#5a5a5a"/><rect x="6" y="1048" width="1" height="1" fill="#5a5a5a"/>
<rect x="3" y="1051" width="1" height="1" fill="#5a5a5a"/><rect x="6" y="1051" width="1" height="1" fill="#5a5a5a"/>
<rect x="3" y="1054" width="1" height="1" fill="#5a5a5a"/><rect x="6" y="1054" width="1" height="1" fill="#5a5a5a"/>
<rect x="3" y="1057" width="1" height="1" fill="#5a5a5a"/><rect x="6" y="1057" width="1" height="1" fill="#5a5a5a"/>
<rect x="3" y="1060" width="1" height="1" fill="#5a5a5a"/><rect x="6" y="1060" width="1" height="1" fill="#5a5a5a"/>
<rect x="3" y="1063" width="1" height="1" fill="#5a5a5a"/><rect x="6" y="1063" width="1" height="1" fill="#5a5a5a"/>
<rect x="3" y="1066" width="1" height="1" fill="#5a5a5a"/><rect x="6" y="1066" width="1" height="1" fill="#5a5a5a"/>
<rect x="3" y="1069" width="1" height="1" fill="#5a5a5a"/><rect x="6" y="1069" width="1" height="1" fill="#5a5a5a"/>
<rect x="3" y="1072" width="1" height="1" fill="#5a5a5a"/><rect x="6" y="1072" width="1" height="1" fill="#5a5a5a"/>
<rect x="3" y="1075" width="1" height="1" fill="#5a5a5a"/><rect x="6" y="1075" width="1" height="1" fill="#5a5a5a"/>
<rect x="3" y="1080" width="1" height="1" fill="#5a5a5a"/><rect x="6" y="1080" width="1" height="1" fill="#5a5a5a"/>
<rect x="3" y="1083" width="1" height="1" fill="#5a5a5a"/><rect x="6" y="1083" width="1" height="1" fill="#5a5a5a"/>
<rect x="3" y="1086" width="1" height="1" fill="#5a5a5a"/><rect x="6" y="1086" width="1" height="1" fill="#5a5a5a"/>
<path d="M1874 765 L1882 760 L1882 770Z" fill="#e0e0e0"/><path d="M1884 764 l2.5 -4 l2.5 4 M1886.5 761 v9" stroke="#40b0b0" stroke-width="1.6" fill="none"/>
<path d="M1898 765 L1906 760 L1906 770Z" fill="#e0e0e0"/><path d="M1908 766 l2.5 4 l2.5 -4 M1910.5 769 v-9" stroke="#40b0b0" stroke-width="1.6" fill="none"/>
<path d="M1914 147 L1920 139 L1920 150Z" fill="#8090d0"/>
<defs><linearGradient id="gArmL" x1="0" y1="0" x2="1" y2="0"><stop offset="0" stop-color="#b2b2b2"/><stop offset="0.6" stop-color="#a2a2a2"/><stop offset="1" stop-color="#7e7e7e"/></linearGradient><linearGradient id="gArmR" x1="0" y1="0" x2="1" y2="0"><stop offset="0" stop-color="#8a8a8a"/><stop offset="0.35" stop-color="#a8a8a8"/><stop offset="1" stop-color="#9a9a9a"/></linearGradient><linearGradient id="gTorso" x1="0" y1="0" x2="1" y2="0"><stop offset="0" stop-color="#9a9a9a"/><stop offset="0.3" stop-color="#a6a6a6"/><stop offset="0.8" stop-color="#a0a0a0"/><stop offset="1" stop-color="#8c8c8c"/></linearGradient><linearGradient id="gLeg" x1="0" y1="0" x2="1" y2="0"><stop offset="0" stop-color="#8e8e8e"/><stop offset="0.4" stop-color="#a8a8a8"/><stop offset="1" stop-color="#929292"/></linearGradient><linearGradient id="gSkirt" x1="0" y1="0" x2="1" y2="0"><stop offset="0" stop-color="#a4a4a4"/><stop offset="0.5" stop-color="#9c9c9c"/><stop offset="1" stop-color="#8e8e8e"/></linearGradient><linearGradient id="gEar" x1="0" y1="0" x2="1" y2="0"><stop offset="0" stop-color="#a0a0a0"/><stop offset="1" stop-color="#b4b4b4"/></linearGradient><clipPath id="vp"><rect x="52" y="170" width="1470" height="793"/></clipPath></defs><g clip-path="url(#vp)">
<path d="M730.0 170.0 C731.6 168.7 741.4 181.4 745.0 185.0 C748.6 188.6 753.9 193.7 757.0 197.0 C760.1 200.3 765.5 206.7 768.0 210.0 C770.5 213.3 774.1 218.4 776.0 222.0 C777.9 225.6 782.5 233.8 782.0 237.0 C781.5 240.2 774.4 242.7 772.0 246.0 C769.6 249.3 766.7 260.7 764.0 262.0 C761.3 263.3 754.9 259.2 752.0 256.0 C749.1 252.8 744.1 242.9 742.0 238.0 C739.9 233.1 737.2 224.7 736.0 219.0 C734.8 213.3 733.8 201.5 733.0 195.0 C732.2 188.5 728.4 171.3 730.0 170.0Z" fill="#a8a8a8"/>
<path d="M732.0 176.0 C733.3 176.8 740.8 193.3 744.0 200.0 C747.2 206.7 753.5 219.3 756.0 226.0 C758.5 232.7 761.9 245.5 763.0 250.0 C764.1 254.5 765.2 259.7 764.0 260.0 C762.8 260.3 756.7 255.5 754.0 252.0 C751.3 248.5 746.3 239.1 744.0 234.0 C741.7 228.9 738.3 219.3 737.0 214.0 C735.7 208.7 734.7 199.1 734.0 194.0 C733.3 188.9 730.7 175.2 732.0 176.0Z" fill="#9a9a9a"/>
<path d="M730 171 Q737 186 744 199 Q756 226 763 249 L764 262" fill="none" stroke="#202020" stroke-width="1.6"/>
<path d="M841.0 170.0 C841.4 172.8 839.7 189.9 839.0 197.0 C838.3 204.1 836.8 216.9 836.0 223.0 C835.2 229.1 835.1 239.9 833.0 243.0 C830.9 246.1 823.3 246.1 820.0 246.0 C816.7 245.9 809.2 244.3 808.0 242.0 C806.8 239.7 809.8 232.5 811.0 229.0 C812.2 225.5 815.0 220.3 817.0 216.0 C819.0 211.7 823.5 202.3 826.0 197.0 C828.5 191.7 834.0 179.6 836.0 176.0 C838.0 172.4 840.6 167.2 841.0 170.0Z" fill="#acacac"/>
<path d="M841 171 Q840 200 836 223 Q834 236 832 246" fill="none" stroke="#1e1e1e" stroke-width="2"/>
<path d="M764.0 262.0 C765.5 257.9 769.6 249.3 772.0 246.0 C774.4 242.7 778.9 238.1 782.0 237.0 C785.1 235.9 791.5 237.3 795.0 238.0 C798.5 238.7 804.4 241.2 808.0 242.0 C811.6 242.8 818.3 243.5 822.0 244.0 C825.7 244.5 834.3 243.5 836.0 246.0 C837.7 248.5 835.5 257.8 835.0 263.0 C834.5 268.2 833.2 280.1 832.0 285.0 C830.8 289.9 828.7 297.2 826.0 300.0 C823.3 302.8 816.8 305.5 812.0 306.0 C807.2 306.5 794.8 304.7 790.0 304.0 C785.2 303.3 779.5 302.6 776.0 301.0 C772.5 299.4 766.0 295.2 764.0 292.0 C762.0 288.8 761.0 281.0 761.0 277.0 C761.0 273.0 762.5 266.1 764.0 262.0Z" fill="#ababab"/>
<path d="M806.0 286.0 C807.6 283.9 815.3 281.2 818.0 282.0 C820.7 282.8 825.5 289.1 826.0 292.0 C826.5 294.9 823.9 302.1 822.0 304.0 C820.1 305.9 814.1 306.8 812.0 306.0 C809.9 305.2 806.8 300.7 806.0 298.0 C805.2 295.3 804.4 288.1 806.0 286.0Z" fill="#b8b8b8"/>
<path d="M764 290 Q772 300 790 302 Q808 305 826 300 Q828 306 822 310 Q800 314 778 308 Q764 302 764 290Z" fill="#262626"/>
<path d="M764 262 Q760 278 764 292" fill="none" stroke="#303030" stroke-width="1.2"/>
<path d="M764.0 302.0 C770.3 300.3 780.2 307.7 790.0 308.0 C799.8 308.3 817.0 302.3 823.0 304.0 C829.0 305.7 823.8 314.0 826.0 318.0 C828.2 322.0 840.3 324.7 836.0 328.0 C831.7 331.3 816.0 337.7 800.0 338.0 C784.0 338.3 748.0 333.3 740.0 330.0 C732.0 326.7 748.0 322.7 752.0 318.0 C756.0 313.3 757.7 303.7 764.0 302.0Z" fill="#a0a0a0"/>
<path d="M745.0 318.0 C736.6 319.3 731.9 324.1 728.0 327.0 C724.1 329.9 715.9 340.1 712.0 343.0 C708.1 345.9 698.0 349.3 695.0 352.0 C692.0 354.7 687.5 362.1 686.0 366.0 C684.5 369.9 683.9 380.1 682.0 385.0 C680.1 389.9 672.5 403.1 670.0 408.0 C667.5 412.9 663.6 422.3 661.0 427.0 C658.4 431.7 650.5 443.3 648.0 448.0 C645.5 452.7 641.6 461.5 640.0 467.0 C638.4 472.5 634.9 488.8 634.0 495.0 C633.1 501.2 632.5 515.5 632.0 520.0 C631.5 524.5 627.2 532.4 630.0 534.0 C632.8 535.6 652.5 535.9 656.0 534.0 C659.5 532.1 658.1 522.5 660.0 518.0 C661.9 513.5 669.9 500.1 672.0 495.0 C674.1 489.9 676.5 478.4 678.0 474.0 C679.5 469.6 682.5 460.7 685.0 457.0 C687.5 453.3 696.1 446.0 699.0 442.0 C701.9 438.0 707.8 427.7 710.0 423.0 C712.2 418.3 716.0 400.5 718.0 402.0 C720.0 403.5 724.0 428.5 727.0 436.0 C730.0 443.5 741.5 459.7 744.0 466.0 C746.5 472.3 748.0 485.1 748.0 490.0 C748.0 494.9 744.9 505.0 744.0 508.0 C743.1 511.0 728.1 515.1 740.0 516.0 C751.9 516.9 834.2 517.9 846.0 516.0 C857.8 514.1 841.7 505.4 841.0 500.0 C840.3 494.6 840.0 477.0 840.0 470.0 C840.0 463.0 840.1 446.1 841.0 440.0 C841.9 433.9 846.1 421.7 848.0 418.0 C849.9 414.3 854.4 406.7 857.0 408.0 C859.6 409.3 866.3 423.8 870.0 429.0 C873.7 434.2 885.9 447.3 889.0 453.0 C892.1 458.7 894.5 472.2 897.0 478.0 C899.5 483.8 906.5 498.0 910.0 503.0 C913.5 508.0 922.6 519.0 927.0 521.0 C931.4 523.0 946.5 522.1 948.0 520.0 C949.5 517.9 941.5 507.9 940.0 503.0 C938.5 498.1 936.5 483.9 935.0 478.0 C933.5 472.1 929.0 456.9 927.0 452.0 C925.0 447.1 921.3 440.3 918.0 436.0 C914.7 431.7 902.4 420.0 899.0 415.0 C895.6 410.0 890.6 398.0 889.0 393.0 C887.4 388.0 886.8 376.3 885.0 372.0 C883.2 367.7 876.9 359.3 874.0 356.0 C871.1 352.7 863.4 346.8 860.0 344.0 C856.6 341.2 848.4 334.6 845.0 332.0 C841.6 329.4 833.6 324.1 831.0 322.0 C828.4 319.9 826.6 314.7 823.0 314.0 C819.4 313.3 809.1 315.5 800.0 316.0 C790.9 316.5 753.4 316.7 745.0 318.0Z" fill="#a2a2a2"/>
<path d="M712.0 345.0 C709.7 344.1 698.5 350.1 695.0 353.0 C691.5 355.9 687.6 362.7 686.0 367.0 C684.4 371.3 684.9 379.5 683.0 385.0 C681.1 390.5 674.8 402.4 672.0 408.0 C669.2 413.6 664.9 421.7 662.0 427.0 C659.1 432.3 652.7 442.7 650.0 448.0 C647.3 453.3 643.9 460.7 642.0 467.0 C640.1 473.3 635.5 490.9 636.0 495.0 C636.5 499.1 643.3 501.3 646.0 498.0 C648.7 494.7 653.1 477.7 656.0 470.0 C658.9 462.3 664.3 448.0 668.0 440.0 C671.7 432.0 679.7 418.0 684.0 410.0 C688.3 402.0 696.3 386.7 700.0 380.0 C703.7 373.3 710.4 364.7 712.0 360.0 C713.6 355.3 714.3 345.9 712.0 345.0Z" fill="#b0b0b0"/>
<path d="M718.0 402.0 C717.2 401.3 712.5 417.7 710.0 423.0 C707.5 428.3 702.3 437.5 699.0 442.0 C695.7 446.5 687.8 452.7 685.0 457.0 C682.2 461.3 679.7 468.9 678.0 474.0 C676.3 479.1 674.4 489.1 672.0 495.0 C669.6 500.9 662.1 512.8 660.0 518.0 C657.9 523.2 655.5 532.7 656.0 534.0 C656.5 535.3 661.3 532.5 664.0 528.0 C666.7 523.5 673.3 506.7 676.0 500.0 C678.7 493.3 681.6 483.1 684.0 478.0 C686.4 472.9 690.8 466.3 694.0 462.0 C697.2 457.7 705.1 450.5 708.0 446.0 C710.9 441.5 714.7 433.9 716.0 428.0 C717.3 422.1 718.8 402.7 718.0 402.0Z" fill="#8c8c8c"/>
<path d="M718 402 Q716 412 710 423 Q700 440 685 457 Q677 476 672 495 Q664 512 656 534" fill="none" stroke="#2e2e2e" stroke-width="1.3"/>
<path d="M718 404 Q728 436 744 466 Q749 484 746 500" fill="none" stroke="#2e2e2e" stroke-width="1.4"/>
<path d="M857.0 408.0 C857.5 410.5 865.7 423.0 870.0 429.0 C874.3 435.0 885.4 446.5 889.0 453.0 C892.6 459.5 894.2 471.3 897.0 478.0 C899.8 484.7 906.0 497.3 910.0 503.0 C914.0 508.7 925.7 521.4 927.0 521.0 C928.3 520.6 922.8 506.5 920.0 500.0 C917.2 493.5 909.2 479.2 906.0 472.0 C902.8 464.8 899.5 452.4 896.0 446.0 C892.5 439.6 884.0 428.8 880.0 424.0 C876.0 419.2 869.1 412.1 866.0 410.0 C862.9 407.9 856.5 405.5 857.0 408.0Z" fill="#8e8e8e"/>
<path d="M889.0 393.0 C889.9 393.7 895.1 409.3 899.0 415.0 C902.9 420.7 914.3 431.1 918.0 436.0 C921.7 440.9 924.7 446.4 927.0 452.0 C929.3 457.6 933.3 471.2 935.0 478.0 C936.7 484.8 938.5 497.7 940.0 503.0 C941.5 508.3 947.3 519.7 946.0 518.0 C944.7 516.3 933.7 497.7 930.0 490.0 C926.3 482.3 921.5 467.7 918.0 460.0 C914.5 452.3 907.5 438.7 904.0 432.0 C900.5 425.3 894.0 415.2 892.0 410.0 C890.0 404.8 888.1 392.3 889.0 393.0Z" fill="#989898"/>
<path d="M857 408 Q870 430 889 453 Q897 478 910 503 Q918 512 927 521" fill="none" stroke="#262626" stroke-width="1.6"/>
<path d="M857 408 Q847 425 842 445 Q839 470 840 500" fill="none" stroke="#5a5a5a" stroke-width="1.2"/>
<path d="M720.0 336.0 C722.7 331.2 738.0 322.8 746.0 322.0 C754.0 321.2 769.7 330.3 780.0 330.0 C790.3 329.7 813.3 319.5 823.0 320.0 C832.7 320.5 848.6 329.2 853.0 334.0 C857.4 338.8 856.9 349.9 856.0 356.0 C855.1 362.1 850.8 374.4 846.0 380.0 C841.2 385.6 826.3 394.8 820.0 398.0 C813.7 401.2 805.9 404.3 799.0 404.0 C792.1 403.7 775.6 399.5 768.0 396.0 C760.4 392.5 747.6 383.1 742.0 378.0 C736.4 372.9 728.9 363.6 726.0 358.0 C723.1 352.4 717.3 340.8 720.0 336.0Z" fill="#a6a6a6"/>
<path d="M742 360 Q762 386 800 392 Q836 388 850 358" fill="none" stroke="#8a8a8a" stroke-width="2.2"/>
<path d="M760 332 Q790 356 826 332" fill="none" stroke="#909090" stroke-width="2"/>
<path d="M625.0 528.0 C629.7 523.9 651.5 526.9 656.0 530.0 C660.5 533.1 657.8 547.0 659.0 551.0 C660.2 555.0 661.7 557.1 665.0 560.0 C668.3 562.9 680.8 570.1 684.0 573.0 C687.2 575.9 689.8 581.1 689.0 582.0 C688.2 582.9 682.1 581.6 678.0 580.0 C673.9 578.4 661.1 568.5 658.0 570.0 C654.9 571.5 655.0 584.3 655.0 591.0 C655.0 597.7 657.2 612.9 658.0 620.0 C658.8 627.1 661.8 640.3 661.0 644.0 C660.2 647.7 654.4 646.8 652.0 648.0 C649.6 649.2 645.7 653.4 643.0 653.0 C640.3 652.6 635.1 648.1 632.0 645.0 C628.9 641.9 622.7 635.2 620.0 630.0 C617.3 624.8 612.7 612.3 612.0 606.0 C611.3 599.7 613.8 589.0 615.0 583.0 C616.2 577.0 619.7 568.3 621.0 561.0 C622.3 553.7 620.3 532.1 625.0 528.0Z" fill="#a4a4a4"/>
<path d="M658 570 Q654 592 658 620 Q660 636 661 644" fill="none" stroke="#3a3a3a" stroke-width="1"/>
<path d="M923.0 515.0 C926.7 511.9 945.5 511.7 950.0 515.0 C954.5 518.3 955.7 534.0 957.0 540.0 C958.3 546.0 959.3 555.3 960.0 560.0 C960.7 564.7 962.0 570.3 962.0 575.0 C962.0 579.7 960.7 589.3 960.0 595.0 C959.3 600.7 958.5 612.5 957.0 618.0 C955.5 623.5 950.6 633.1 949.0 636.0 C947.4 638.9 946.3 640.3 945.0 640.0 C943.7 639.7 940.2 636.9 939.0 634.0 C937.8 631.1 936.1 622.8 936.0 618.0 C935.9 613.2 937.9 604.1 938.0 598.0 C938.1 591.9 938.7 576.3 937.0 572.0 C935.3 567.7 928.3 566.3 925.0 566.0 C921.7 565.7 915.1 568.7 912.0 570.0 C908.9 571.3 902.8 576.7 902.0 576.0 C901.2 575.3 904.1 568.2 906.0 565.0 C907.9 561.8 913.9 555.6 916.0 552.0 C918.1 548.4 921.1 542.9 922.0 538.0 C922.9 533.1 919.3 518.1 923.0 515.0Z" fill="#a6a6a6"/>
<path d="M902 576 Q912 568 925 566 Q936 570 938 590" fill="none" stroke="#2e2e2e" stroke-width="1.1"/>
<path d="M724.0 510.0 C732.8 509.2 769.1 519.5 786.0 520.0 C802.9 520.5 841.7 512.7 851.0 514.0 C860.3 515.3 856.4 525.7 856.0 530.0 C855.6 534.3 856.8 542.8 848.0 546.0 C839.2 549.2 805.9 554.7 790.0 554.0 C774.1 553.3 738.3 544.7 729.0 541.0 C719.7 537.3 720.7 530.1 720.0 526.0 C719.3 521.9 715.2 510.8 724.0 510.0Z" fill="#a4a4a4"/>
<path d="M729 541 Q790 556 848 546" fill="none" stroke="#7a7a7a" stroke-width="1.2"/>
<path d="M730.0 560.0 C739.9 544.0 782.7 549.3 790.0 560.0 C797.3 570.7 787.7 621.3 785.0 640.0 C782.3 658.7 773.2 688.3 770.0 700.0 C766.8 711.7 763.5 719.7 761.0 728.0 C758.5 736.3 752.7 752.5 751.0 762.0 C749.3 771.5 750.1 790.2 748.0 799.0 C745.9 807.8 737.5 819.9 735.0 828.0 C732.5 836.1 729.9 849.9 729.0 860.0 C728.1 870.1 727.9 893.9 728.0 904.0 C728.1 914.1 730.3 928.0 730.0 936.0 C729.7 944.0 732.1 960.3 726.0 964.0 C719.9 967.7 688.5 967.7 684.0 964.0 C679.5 960.3 689.9 942.7 692.0 936.0 C694.1 929.3 698.4 921.2 700.0 914.0 C701.6 906.8 703.9 892.1 704.0 882.0 C704.1 871.9 702.1 849.6 701.0 838.0 C699.9 826.4 695.9 805.1 696.0 795.0 C696.1 784.9 700.0 770.9 702.0 762.0 C704.0 753.1 709.1 738.9 711.0 728.0 C712.9 717.1 713.5 702.4 716.0 680.0 C718.5 657.6 720.1 576.0 730.0 560.0Z" fill="url(#gLeg)"/>
<path d="M800.0 560.0 C804.4 548.0 838.3 549.3 845.0 560.0 C851.7 570.7 849.1 617.6 850.0 640.0 C850.9 662.4 851.2 710.3 852.0 728.0 C852.8 745.7 856.0 761.1 856.0 773.0 C856.0 784.9 852.3 805.4 852.0 817.0 C851.7 828.6 853.3 849.9 854.0 860.0 C854.7 870.1 854.9 886.6 857.0 893.0 C859.1 899.4 865.5 903.7 870.0 908.0 C874.5 912.3 886.5 921.3 891.0 925.0 C895.5 928.7 902.5 932.9 904.0 936.0 C905.5 939.1 907.3 947.7 902.0 948.0 C896.7 948.3 872.5 941.2 864.0 938.0 C855.5 934.8 843.1 927.2 838.0 924.0 C832.9 920.8 827.3 916.8 826.0 914.0 C824.7 911.2 827.1 907.3 828.0 903.0 C828.9 898.7 832.7 889.2 833.0 882.0 C833.3 874.8 831.5 856.9 830.0 849.0 C828.5 841.1 824.5 830.2 822.0 823.0 C819.5 815.8 812.2 806.3 811.0 795.0 C809.8 783.7 812.9 757.3 813.0 738.0 C813.1 718.7 813.7 673.7 812.0 650.0 C810.3 626.3 795.6 572.0 800.0 560.0Z" fill="url(#gLeg)"/>
<path d="M751 762 Q748 799 735 828 Q728 860 729 904" fill="none" stroke="#2a2a2a" stroke-width="1.3"/>
<path d="M811 795 Q822 823 830 849" fill="none" stroke="#2a2a2a" stroke-width="1.3"/>
<path d="M724 541 Q716 603 708 680 Q706 710 706 732 L747 724 Q760 680 770 644 Q776 620 783 598 L787 548Z" fill="url(#gSkirt)"/>
<path d="M812 548 L816 610 Q833 660 847 706 L848 714 L866 721 Q862 680 858 629 Q852 590 847 546Z" fill="#969696"/>
<path d="M781 598 Q780 660 776 732 Q786 752 798 773 Q806 760 815 744 Q816 680 816 610 Q800 604 781 598Z" fill="#a6a6a6"/>
<path d="M783.0 536.0 C785.4 531.7 795.5 530.3 800.0 530.0 C804.5 529.7 814.3 530.0 817.0 534.0 C819.7 538.0 820.0 553.9 820.0 560.0 C820.0 566.1 819.4 576.3 817.0 580.0 C814.6 583.7 806.0 587.5 802.0 588.0 C798.0 588.5 789.7 587.5 787.0 584.0 C784.3 580.5 782.5 568.4 782.0 562.0 C781.5 555.6 780.6 540.3 783.0 536.0Z" fill="#a8a8a8"/>
<path d="M784 580 Q792 590 806 588 Q816 586 819 576" fill="none" stroke="#303030" stroke-width="1.8"/>
<path d="M706 732 L747 724" fill="none" stroke="#262626" stroke-width="1.6" stroke-dasharray="2,1"/>
<path d="M847 713 L866 721" fill="none" stroke="#262626" stroke-width="1.6"/>
<path d="M724 541 Q716 603 708 680 Q706 710 706 732" fill="none" stroke="#3a3a3a" stroke-width="1.2"/>
<path d="M770 644 Q760 680 747 724" fill="none" stroke="#2a2a2a" stroke-width="1.2"/>
<path d="M816 610 Q833 660 847 706" fill="none" stroke="#2a2a2a" stroke-width="1.2"/>
<path d="M858 629 Q862 680 866 721" fill="none" stroke="#3a3a3a" stroke-width="1.2"/>
<path d="M746 315 Q716 318 716 340 Q718 362 736 378 Q760 400 803 406 Q838 398 852 372 Q860 350 856 332 Q850 318 823 317" fill="none" stroke="#e8e8e8" stroke-width="1.6"/>
<ellipse cx="789" cy="441" rx="79" ry="3.5" fill="none" stroke="#e8e8e8" stroke-width="1.6"/>
<ellipse cx="790" cy="492" rx="63" ry="3.5" fill="none" stroke="#e8e8e8" stroke-width="1.6"/>
<path d="M719 531 Q740 541 786 541 Q840 540 859 533 Q855 527 846 525" fill="none" stroke="#e8e8e8" stroke-width="1.6"/>
<path d="M716 512 Q697 516 696 536 Q698 556 718 563" fill="none" stroke="#e8e8e8" stroke-width="1.4"/>
<path d="M714 520 Q706 530 710 545 Q716 555 720 553" fill="none" stroke="#e8e8e8" stroke-width="1.2"/>
<circle cx="810.7" cy="591.4" r="20" fill="none" stroke="#e4e4e4" stroke-width="1.5"/>
<circle cx="807" cy="664" r="20" fill="none" stroke="#e4e4e4" stroke-width="1.5"/>
<circle cx="808.8" cy="723" r="19.5" fill="none" stroke="#e4e4e4" stroke-width="1.5"/>
<ellipse cx="803" cy="226.6" rx="21.7" ry="9.5" fill="none" stroke="#eeeeee" stroke-width="1.6"/>
<path d="M791 218 Q800 222 801 236" fill="none" stroke="#eeeeee" stroke-width="1.3"/>
<ellipse cx="729" cy="199.5" rx="6" ry="14" fill="none" stroke="#e8b4b4" stroke-width="1.3"/>
<ellipse cx="743.5" cy="235.5" rx="8" ry="17.5" transform="rotate(-10 743.5 235.5)" fill="none" stroke="#e8b4b4" stroke-width="1.3"/>
<path d="M718 170 Q722 182 726 170" fill="none" stroke="#e8b4b4" stroke-width="1.3"/>
<ellipse cx="784" cy="255" rx="11.7" ry="5.5" fill="none" stroke="#e8b4b4" stroke-width="1.3"/>
<path d="M822 251 L830 249 L837 253 L835 261 L826 264 L820 259Z" fill="rgba(120,110,230,0.25)" stroke="#3a32c8" stroke-width="1.4"/>
<path d="M848 169 L849 209 L839 253" fill="none" stroke="#5ad0f0" stroke-width="1.8"/>
<ellipse cx="686.7" cy="351.6" rx="22" ry="3.2" transform="rotate(-42 686.7 351.6)" fill="none" stroke="#d8a8a8" stroke-width="1.3"/>
<ellipse cx="885" cy="351.6" rx="22" ry="5" transform="rotate(40 885 351.6)" fill="none" stroke="#2a2a9a" stroke-width="1.3"/>
<ellipse cx="285" cy="316" rx="3.2" ry="51.5" transform="rotate(-3 285 316)" fill="none" stroke="#34346e" stroke-width="1.5"/>
<path d="M507 419 L507.5 455 L508.5 462" fill="none" stroke="#e8b8b8" stroke-width="1.5"/>
<ellipse cx="1265.5" cy="325" rx="24" ry="42" fill="none" stroke="#22226a" stroke-width="1.4"/>
<path d="M618 530 Q640 522 668 532 L666 540 Q640 532 620 540Z" fill="rgba(200,70,70,0.45)"/>
<path d="M620 532 Q640 526 660 532" fill="none" stroke="#e05858" stroke-width="1.8"/>
<ellipse cx="627" cy="552" rx="16" ry="13" fill="none" stroke="#e8b4b4" stroke-width="1.3"/>
<ellipse cx="666" cy="547" rx="6.5" ry="6" fill="none" stroke="#e8b4b4" stroke-width="1.2"/>
<ellipse cx="678" cy="558" rx="6.5" ry="6" fill="none" stroke="#e8b4b4" stroke-width="1.2"/>
<ellipse cx="614" cy="586" rx="3.5" ry="6" fill="none" stroke="#e8b4b4" stroke-width="1.2"/>
<ellipse cx="620" cy="590" rx="4" ry="6" fill="none" stroke="#e8b4b4" stroke-width="1.2"/>
<ellipse cx="629" cy="592" rx="5" ry="6" fill="none" stroke="#e8b4b4" stroke-width="1.2"/>
<ellipse cx="641" cy="588" rx="6" ry="7" fill="none" stroke="#e8b4b4" stroke-width="1.2"/>
<ellipse cx="612" cy="600" rx="3.5" ry="6" fill="none" stroke="#e8b4b4" stroke-width="1.2"/>
<ellipse cx="619" cy="608" rx="4" ry="6" fill="none" stroke="#e8b4b4" stroke-width="1.2"/>
<ellipse cx="629" cy="612" rx="4" ry="7" fill="none" stroke="#e8b4b4" stroke-width="1.2"/>
<ellipse cx="643" cy="606" rx="5" ry="7" fill="none" stroke="#e8b4b4" stroke-width="1.2"/>
<ellipse cx="612" cy="614" rx="3" ry="5" fill="none" stroke="#e8b4b4" stroke-width="1.2"/>
<ellipse cx="620" cy="622" rx="4" ry="6" fill="none" stroke="#e8b4b4" stroke-width="1.2"/>
<ellipse cx="631" cy="628" rx="4" ry="6" fill="none" stroke="#e8b4b4" stroke-width="1.2"/>
<ellipse cx="646" cy="622" rx="5" ry="7" fill="none" stroke="#e8b4b4" stroke-width="1.2"/>
<path d="M931 415 Q924 434 937 455 Q934 434 939 415Z" fill="none" stroke="#6ac8d8" stroke-width="1.3"/>
<rect x="929.5" y="517.5" width="22" height="22" fill="none" stroke="#70d8d8" stroke-width="1.3"/>
<path d="M948 528 L975 538" fill="none" stroke="#2020c0" stroke-width="1.6"/>
<ellipse cx="930" cy="535" rx="14" ry="6" transform="rotate(-15 930 535)" fill="none" stroke="#58d8c8" stroke-width="1.3"/>
<ellipse cx="962" cy="540" rx="6" ry="13" transform="rotate(-10 962 540)" fill="none" stroke="#58d8c8" stroke-width="1.3"/>
<ellipse cx="917" cy="556" rx="6" ry="6.5" fill="none" stroke="#58d8c8" stroke-width="1.3"/>
<ellipse cx="955" cy="578" rx="4" ry="7" fill="none" stroke="#3ae0a0" stroke-width="1.2"/>
<ellipse cx="963" cy="582" rx="4" ry="7" fill="none" stroke="#3ae0a0" stroke-width="1.2"/>
<ellipse cx="955" cy="592" rx="4" ry="7" fill="none" stroke="#3ae0a0" stroke-width="1.2"/>
<ellipse cx="963" cy="596" rx="4" ry="7" fill="none" stroke="#3ae0a0" stroke-width="1.2"/>
<ellipse cx="955" cy="606" rx="4" ry="7" fill="none" stroke="#3ae0a0" stroke-width="1.2"/>
<ellipse cx="962" cy="610" rx="4" ry="7" fill="none" stroke="#3ae0a0" stroke-width="1.2"/>
<ellipse cx="957" cy="618" rx="4" ry="7" fill="none" stroke="#3ae0a0" stroke-width="1.2"/>
<rect x="996" y="448" width="18" height="16" fill="#e6e600"/><rect x="998" y="451" width="10" height="10" fill="none" stroke="#6a6a20" stroke-width="1.2"/><path d="M1005 454 L1005 468 L1008 465 L1011 470 L1013 469 L1010 464 L1014 464Z" fill="#f0f0f0" stroke="#555" stroke-width="0.6"/>
<ellipse cx="943.7" cy="778" rx="5.5" ry="21" transform="rotate(-6 943.7 778)" fill="none" stroke="#58c8d8" stroke-width="1.3"/>
<ellipse cx="735.5" cy="795" rx="4.5" ry="21.5" transform="rotate(-8 735.5 795)" fill="none" stroke="#e8b4b4" stroke-width="1.3"/>
<ellipse cx="789" cy="948" rx="157" ry="68" fill="none" stroke="#f0f0f0" stroke-width="1.6"/>
<ellipse cx="788" cy="950" rx="143" ry="65" fill="none" stroke="#c8cc50" stroke-width="1.8"/>
<path d="M692 908 Q694 890 712 885 Q730 886 733 905 Q732 915 726 916 Q708 912 692 916Z" fill="none" stroke="#e8b4b4" stroke-width="1.3"/>
<path d="M686 938 Q690 918 706 910 Q726 912 728 930 Q726 940 722 940 Q704 934 686 940Z" fill="none" stroke="#e8b4b4" stroke-width="1.3"/>
<path d="M676 960 Q680 944 690 932 M728 930 Q738 940 736 960" fill="none" stroke="#c83838" stroke-width="1.6"/>
<path d="M840 875 Q850 866 862 874 Q872 886 868 898 Q856 900 845 892 Q838 884 840 875Z" fill="none" stroke="#80d8e0" stroke-width="1.3"/>
<path d="M858 900 Q864 884 880 894 Q892 906 894 918 Q880 924 866 920 Q856 912 858 900Z" fill="none" stroke="#80d8e0" stroke-width="1.3"/>
<path d="M822 912 Q826 930 850 942 Q880 956 912 952 Q924 946 918 938 Q904 936 890 944 Q870 940 850 928 Q832 916 822 912Z" fill="none" stroke="#3030c8" stroke-width="1.6"/>
<text x="765" y="955" font-size="11" fill="#e8e8e8" color="#e8e8e8" stroke-width="0.15" font-weight="700" textLength="29" lengthAdjust="spacingAndGlyphs">persp</text>
<path d="M79 935 V914" stroke="#38c038" stroke-width="1.6"/><path d="M79 935 L95 930" stroke="#d84040" stroke-width="1.4"/><circle cx="81" cy="935" r="1.6" fill="#3030d0"/>
</g>
</svg>
</div></body></html>
